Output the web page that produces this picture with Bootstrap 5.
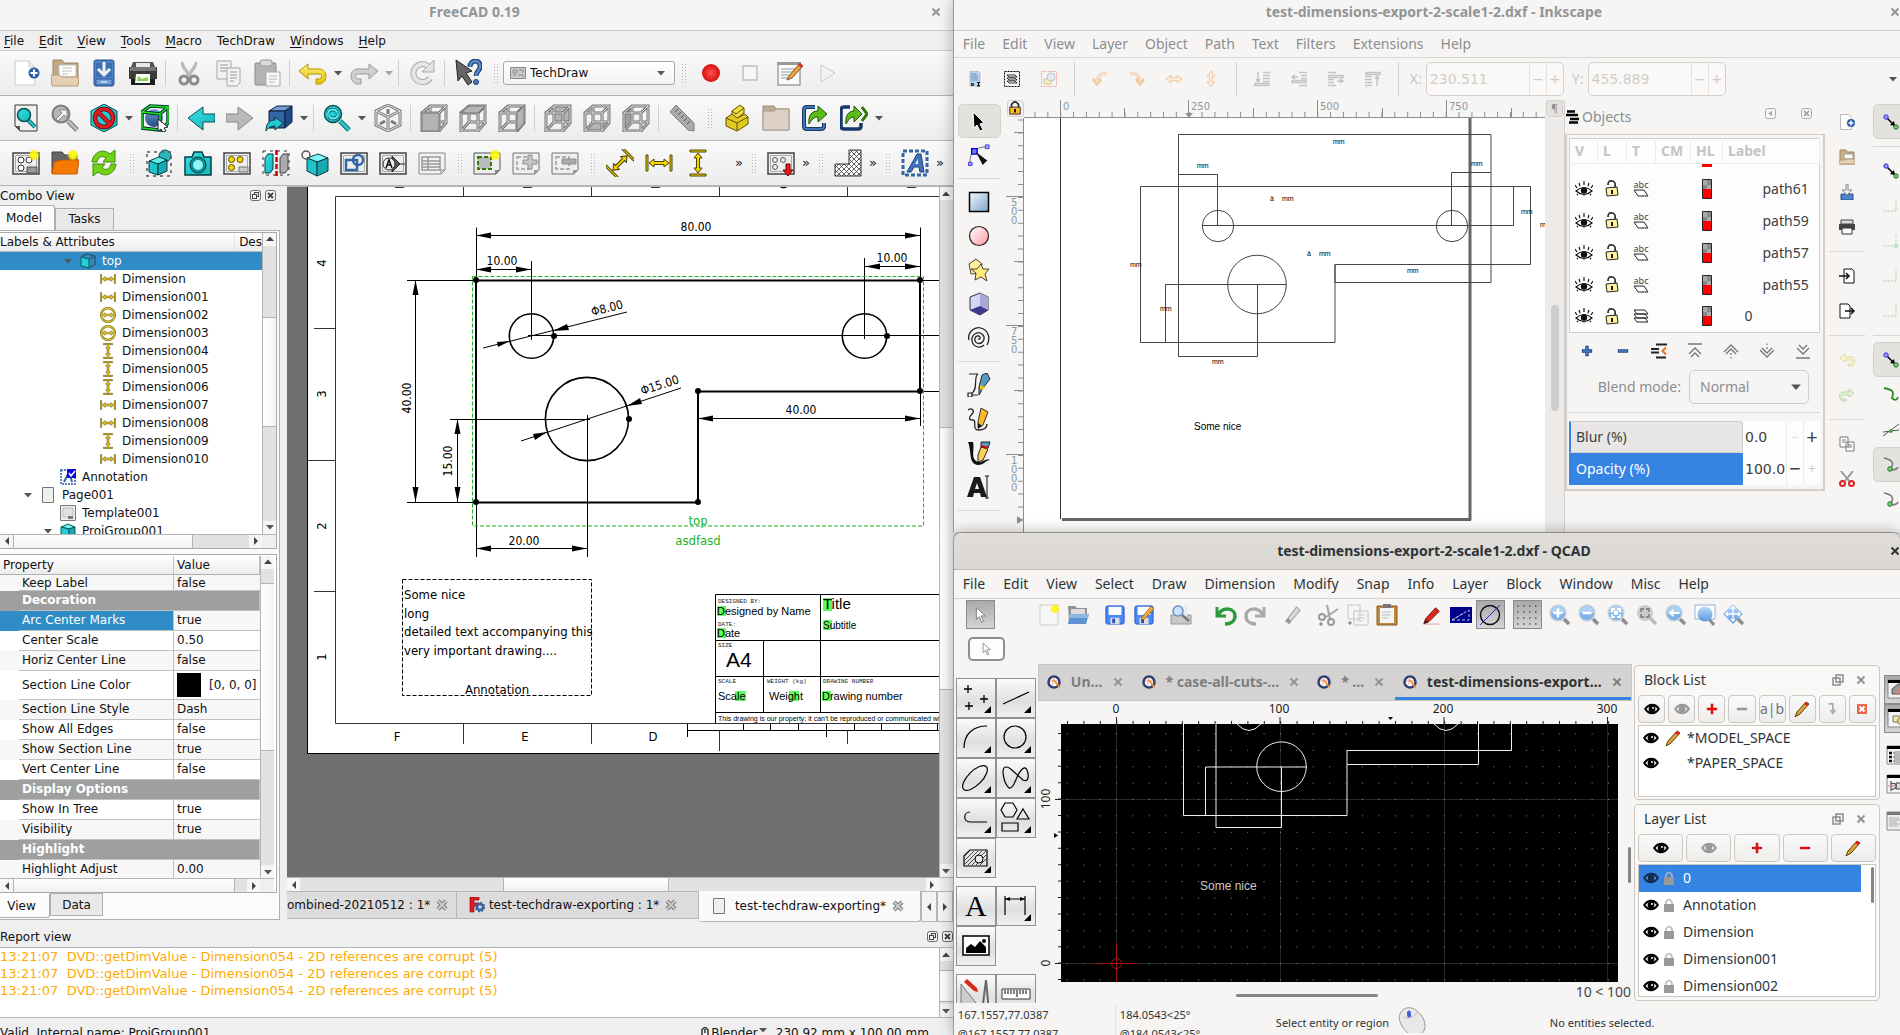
<!DOCTYPE html>
<html lang="en">
<head>
<meta charset="utf-8">
<meta name="viewport" content="width=device-width, initial-scale=1">
<title>CAD desktop</title>
<link href="https://cdn.jsdelivr.net/npm/bootstrap@5.3.0/dist/css/bootstrap.min.css" rel="stylesheet">
<style>
:root{--noto:"Noto Sans","Open Sans",sans-serif;--deja:"DejaVu Sans",sans-serif}
body{height:100vh;overflow:hidden;background:#efefef;font:14px/20px var(--noto);color:#2e3436}
.desk{height:100vh;overflow:hidden}
button,input,select{font:inherit;color:inherit}
.btn{--bs-btn-padding-x:0;--bs-btn-padding-y:0;--bs-btn-font-size:inherit;--bs-btn-line-height:inherit;--bs-btn-border-width:0;--bs-btn-border-radius:0;--bs-btn-color:inherit;font-family:inherit;display:inline-flex;align-items:center;justify-content:center;flex:none}
svg{display:block;flex:none;overflow:hidden}
.i28{width:28px;height:28px}.i24{width:24px;height:24px}.i22{width:22px;height:22px}.i20{width:20px;height:20px}.i16{width:16px;height:16px}.i12{width:12px;height:12px}.i10{width:10px;height:10px}
.clip{overflow:hidden;min-width:0;min-height:0}
.titlebar{height:31px;background:#f6f5f4;border-bottom:1px solid #cfcdcb;color:#929595;font-weight:700;padding:0 0 6px 24px}
.titlebar .btn{width:10px;height:16px}

/* FreeCAD */
.fc{flex:0 0 50.15%;background:#efefef;font:12px/16px var(--deja);color:#111}
.fc .titlebar{font:700 14px/20px var(--noto);padding-left:18px;padding-right:12px}
.fcmenu{height:20px;border-bottom:1px solid #cfcfcf;gap:15px;padding:0 4px}
.fcmenu u{text-underline-offset:2px}
.fctb{height:45px;border-bottom:1px solid #b4b4b4;background:linear-gradient(#fafafa,#ececec);padding-right:8px}
.fctb .btn{width:39px;height:40px}
.fctb .dd{width:12px}
.sepv{width:7px;height:26px;background:linear-gradient(#cfcfcf,#cfcfcf) center/1px 100% no-repeat;flex:none}
.grip{width:16px;height:20px;flex:none;background:radial-gradient(circle,#b5b5b5 0 1px,transparent 1px) 6px 0/3px 3px repeat;background-clip:content-box;padding:0 5px}
.grip0{width:6px;padding:0 2px}
.more{font-size:13px}
.wb{width:172px;height:24px;border:1px solid #a8a8a8;border-radius:3px;background:linear-gradient(#fff,#f3f3f3);padding:0 8px 0 6px}
.wb select{appearance:none;border:0;background:none;padding:0 0 0 4px;color:#111}
.combo{width:287px;flex:none;padding-right:7px}
.dockttl{height:20px}
.dockttl svg{width:11px;height:11px}
.rephead{height:23px;padding-top:2px}
.fctab{border:1px solid #b0b0b0!important;height:23px;width:59px;background:#e9e9e9}
.fctab.on{background:#fcfcfc;height:26px;width:55px;border-bottom-color:#fcfcfc!important;border-left:0!important;border-radius:0 3px 0 0;padding-right:6px}
.fctab.low{height:25px;width:50px;border-radius:0 0 3px 0;border-color:#fcfcfc #b0b0b0 #b0b0b0!important}
.fctab.lowd{width:53px}
.fctabs{height:25px;margin-bottom:-1px}
.lowtabs{height:26px}
.pane{border:1px solid #b0b0b0;border-left:0;background:#fbfbfb;padding:1px 2px 0 0;margin-bottom:4px}
.boxed{border:1px solid #a9a9a9;border-left:0;background:#fff}
.treebox{height:317px}
.propbox{padding:1px 2px 0 0;margin-top:5px}
.hdr{height:19px;background:linear-gradient(#fff,#ececec);border-bottom:1px solid #b9b9b9;flex:none}
.trow{height:18px;white-space:nowrap}
.lv1{padding-left:20px}.lv2{padding-left:40px}.lv3{padding-left:60px}.lv5{padding-left:100px}
.trow .tw{width:20px;padding-left:3px;flex:none}
.trow .lb{padding-left:6px}
.sel{background:#308cc6;color:#fff}
.sbv,.sbh{flex:none;display:flex;background:#e2e2e2}
.sbv{width:14px;flex-direction:column;border-left:1px solid #b4b4b4}
.sbh{height:14px;border-top:1px solid #b4b4b4}
.sbv .btn{width:100%;height:13px;background:#f6f6f6}.sbh .btn{height:100%;width:13px;background:#f6f6f6}
.sbv .th{background:linear-gradient(90deg,#fff,#f3f3f3);border:solid #b4b4b4;border-width:1px 0}
.sbh .th{background:linear-gradient(#fff,#f0f0f0);border:solid #b4b4b4;border-width:0 1px}
.sbh .cn{width:14px;background:#efefef}
.ptab{width:100%;table-layout:fixed;border-collapse:separate;border-spacing:0}
.ptab td,.ptab th{height:20px;padding:0 0 0 3px;border-bottom:1px solid #c0c0c0;font-weight:400;overflow:hidden;white-space:nowrap;line-height:16px}
.ptab thead th{height:19px;border-bottom-color:#b0b0b0}
.ptab th{border-right:1px solid #c0c0c0}
.ptab tbody tr>:first-child{border-bottom:0}
.ptab tr.alt>*{background:#f7f7f7}
.ptab tr.grp>*{background:#9f9f9f;color:#fff;font-weight:700}
.ptab tr.cut>*{height:16px;line-height:14px;vertical-align:bottom}
.ptab tr.cur>:nth-child(-n+2){background:#308cc6;color:#fff}
.ptab .tall>*{height:29px}
.swatch{width:24px;height:24px;background:#000}
.canvasg{background:#6f6f6f}
.mainv{border-top:1px solid #b4b4b4}
.mtabs{height:33px}
.mtab{height:28px;border:1px solid #b5b5b5;border-left:0;background:#dcdcdc;white-space:nowrap;padding-left:12px}
.mtab.on{height:31px;background:#fafafa;border-radius:0 0 3px 3px;border-top:0}
.mtab .btn{margin-right:2px}
.mnav{width:16px;height:31px;border:1px solid #b5b5b5!important;background:#f4f4f4}
.report{height:71px;border:solid #b4b4b4;border-width:1px 0;background:#fff;color:#ffaa00;font-size:13px;line-height:17px}
.fcstat{height:17px;padding-top:7px}

/* windows on the right */
.rwin{box-shadow:0 0 14px rgba(0,0,0,.3);background:#f6f5f4;border-left:1px solid #9b9b9b;position:relative}
.menu{gap:18px;padding-left:9px}
.ink{flex:0 0 51.4%;color:#8b8e8f}
.ink .menu{height:27px;border-bottom:1px solid #d8d6d3;gap:17px}
.itb{height:42px;padding-left:3px}
.itb .btn{width:37px;height:32px}
.itb .endb{width:14px}
.itb label{color:#c9c7c5}
.flipx{transform:scaleX(-1)}.quart{transform:rotate(90deg)}.half{transform:rotate(180deg)}
.ivs{width:1px;height:34px;background:#d5d0cc;margin:0 7px 0 6px}
.spin{width:138px;height:34px;border:1px solid #d5d0cc;border-radius:5px;color:#d0cdc9;background:#faf9f8;overflow:hidden;font:14px/20px var(--deja)}
.spin input{width:102px;border:0;background:none;padding:0 3px}
.spin .btn{width:17px;height:32px;border-left:1px solid #e4e1de!important}
.tools{width:51px;padding:4px 4px 0 4px;flex:none}
.tools .btn{width:43px;height:34px;border-radius:5px}
.tools .ihs{margin:6px 0}
.press{background:#e3e2de;border:1px solid #d5d0cc!important}
.ihs{height:1px;background:#d8d5d2;flex:none}
.iscroll{width:19px;background:#ecebea}
.icorner{width:17px;height:17px;font-size:10px;line-height:15px}
.idock{width:261px;flex:none;border-left:1px solid #d5d0cc}
.idhead{height:34px;gap:1px}
.idhead .endb{margin:0 13px 0 24px}
.ibox{border:1px solid #d5cdc8;border-width:1px 2px 2px 2px;padding:3px 3px 4px 2px;height:357px}
.otab{width:100%;table-layout:fixed;background:#fdfdfd;border:1px solid #d5cdc8;color:#3b3f40}
.otab td{height:32px;padding:0;white-space:nowrap;vertical-align:middle}
.otab .p1{padding-left:40px}.otab .p0{padding-left:22px}
.otab th{height:25px;padding:0 0 0 5px;color:#c3c4c4;border-right:1px solid #efeeee;border-bottom:1px solid #efeeee;vertical-align:middle}
.otab tr.cut td{height:9px;vertical-align:top;line-height:0}
.otab svg{margin:auto}
.abc{font-size:9px;line-height:8px;text-align:center}
.orow{height:35px}.orow .btn{width:36px;height:28px}
.brow{padding:2px 11px 8px 0}
.blend{border:1px solid #d0ccc8;border-radius:5px;width:120px;height:34px;position:relative}
.blend select{appearance:none;border:0;background:none;width:100%;padding:0 10px;height:32px;color:#8b8e8f}
.lev{height:32px;color:#3b3f40;background:#fdfdfd}
.lev label{width:175px;padding-left:5px;height:32px;line-height:30px;border:1px solid #d0ccc8;border-left:2px solid #3584e4;background:#e9e7e5;border-radius:0 3px 3px 0}
.lev.full label{background:#3584e4;color:#fff;border-color:#3584e4;border-radius:0}
.lev input{width:43px;border:0;background:none;padding:0 0 0 2px;font:14px/20px var(--deja)}
.lev .btn{width:17px;height:32px;border-left:1px solid #eceaea!important}
.cmd{width:43px;padding:4px 3px 0 4px;flex:none}.cmd .btn{width:36px;height:35px}
.cmd .ihs,.snap .ihs{margin:7px 0 6px}
.snap{width:32px;padding:4px 0 0 5px;flex:none;overflow:hidden}.snap .btn{width:36px;height:35px;border-radius:5px}
.vth{width:8px;background:#cdcdcd;border-radius:4px}

.qc{flex:1 1 0;min-height:0;color:#2e3436;border-radius:8px 8px 0 0;border-top:1px solid #8f8c89}
.qc .titlebar{height:37px;background:linear-gradient(#e1deda,#dad6d2);border-bottom:1px solid #bfb8b1;color:#2e3436;padding-bottom:0;border-radius:8px 8px 0 0}
.qc .menu{height:29px;border-bottom:1px solid #d5d2cf}
.qtb{height:32px;padding-left:12px}
.qtb .btn{width:29px;height:29px}
.w8{width:8px}.w16{width:16px}.w40{width:40px}
.qon{background:linear-gradient(#a9a9a9,#d5d5d5);border:1px solid #8a8a8a!important}
.qrow2{height:33px;padding-top:6px}
.qopt{width:37px;height:24px;border:2px solid #8f8f8f!important;border-radius:5px!important;background:#fdfdfd;margin-left:14px}
.qbox{width:84px;padding:14px 0 0 2px;flex:none}
.qgrid{display:grid;grid-template-columns:40px 40px}
.qgrid .btn{width:40px;height:40px;border:1px solid #909090!important;background:linear-gradient(#fbfbfb,#dfdfdf 60%,#f0f0f0)}
.qgrid .serif{font:30px/40px "Liberation Serif",serif;color:#000}
.qgrid svg{width:40px;height:40px}
.qtabs{height:37px;background:#d5d3d1;border:1px solid #c9c5c1;color:#7c7e7f;font-weight:700}
.qtab{padding:0 11px 0 8px;gap:10px}
.qtab.on{color:#2e3436;box-shadow:inset 0 -3px #3584e4}
.qside{width:248px;padding:1px 0 2px 2px;gap:4px}
.qdock{border:1px solid #cdc7c2;border-radius:4px;background:#f9f8f7;padding:0 3px 3px}
.qblocks{height:135px}
.qdock h2{font-size:14px;line-height:20px;margin:0;height:29px;padding:0 10px 0 6px;font-weight:400;flex:none}
.qb{gap:3px}.qb .btn{flex:1 1 0;height:28px;border:1px solid #cdc7c2!important;border-radius:4px;background:linear-gradient(#fafafa,#eeedec)}
.qlist{background:#fff;border:1px solid #cdc7c2;margin:2px 0 0}
.qblocks .qlist{height:72px}
.lrow{height:27px;padding-left:4px}
.qblocks .lrow{height:25px;gap:6px}
.lrow.on{background:#3584e4;color:#fff;margin-right:14px}
.lth{right:1px;top:2px;width:3px;height:36px;background:#858585}
.qstat{font-size:11px;line-height:19px;height:32px;padding-top:2px}
.qco{width:162px;white-space:nowrap}.qpo{width:156px}.qhint{width:126px;padding:8px 0 0 4px}.qsel{padding:8px 0 0 124px}
.qr{width:16px;flex:none;padding-top:11px}
.qr .btn{height:29px;width:29px;justify-content:flex-start;padding-left:2px}
</style>
<script src="https://cdn.jsdelivr.net/npm/bootstrap@5.3.0/dist/js/bootstrap.bundle.min.js" defer></script>
</head>
<body>
<svg width="0" height="0" class="position-absolute" aria-hidden="true"><defs>
<linearGradient id="gy" x1="0" y1="0" x2="0" y2="1"><stop offset="0" stop-color="#fff27a"/><stop offset="1" stop-color="#e0c000"/></linearGradient>
<linearGradient id="gc" x1="0" y1="0" x2="1" y2="1"><stop offset="0" stop-color="#34e0e2"/><stop offset="1" stop-color="#16b5bd"/></linearGradient>
<linearGradient id="gb" x1="0" y1="0" x2="0" y2="1"><stop offset="0" stop-color="#729fcf"/><stop offset="1" stop-color="#204a87"/></linearGradient>
<linearGradient id="gp" x1="0" y1="0" x2="1" y2="1"><stop offset="0" stop-color="#fff"/><stop offset="1" stop-color="#ff9aa5"/></linearGradient>
<linearGradient id="gs" x1="0" y1="0" x2="1" y2="1"><stop offset="0" stop-color="#f4f9ff"/><stop offset="1" stop-color="#7aa3c8"/></linearGradient>
<linearGradient id="gl" x1="0" y1="0" x2="0" y2="1"><stop offset="0" stop-color="#bcdcf8"/><stop offset="1" stop-color="#5a97dd"/></linearGradient>
<radialGradient id="gglow"><stop offset="0" stop-color="#ffff30"/><stop offset=".6" stop-color="#fff200" stop-opacity=".9"/><stop offset="1" stop-color="#fff200" stop-opacity="0"/></radialGradient>
<radialGradient id="gred"><stop offset="0" stop-color="#ff5050"/><stop offset="1" stop-color="#d80f0f"/></radialGradient>
<pattern id="hatch" width="5" height="5" patternUnits="userSpaceOnUse"><path d="M0 0l5 5M5 0L0 5" stroke="#222" stroke-width=".7"/></pattern>
<symbol id="x" viewBox="0 0 10 10"><path d="M1.500 1.500l7 7M8.500 1.500l-7 7" stroke="currentColor" stroke-width="2"/></symbol>
<symbol id="dn" viewBox="0 0 10 10"><path d="M1 3h8L5 7.500z" fill="#555"/></symbol>
<symbol id="up" viewBox="0 0 10 10"><path d="M1 7h8L5 2.500z" fill="#444"/></symbol>
<symbol id="lf" viewBox="0 0 10 10"><path d="M7 1v8L3 5z" fill="#444"/></symbol>
<symbol id="rt" viewBox="0 0 10 10"><path d="M3 1v8l4-4z" fill="#444"/></symbol>
<symbol id="flt" viewBox="0 0 11 11"><rect x=".5" y=".5" width="10" height="10" rx="2" fill="#f4f4f4" stroke="#666"/><rect x="4.500" y="2.500" width="4" height="4" fill="none" stroke="#444"/><rect x="2.500" y="4.500" width="4" height="4" fill="#f4f4f4" stroke="#444"/></symbol>
<symbol id="cls" viewBox="0 0 11 11"><rect x=".5" y=".5" width="10" height="10" rx="2" fill="#f4f4f4" stroke="#666"/><path d="M3 3l5 5M8 3L3 8" stroke="#444" stroke-width="1.800"/></symbol>
<symbol id="clx" viewBox="0 0 12 12"><path d="M2 2l8 8M10 2l-8 8" stroke="#777" stroke-width="4"/><path d="M2 2l8 8M10 2l-8 8" stroke="#c9c9c9" stroke-width="2.200"/></symbol>
<!-- FreeCAD file toolbar -->
<symbol id="new" viewBox="0 0 28 28"><path d="M3 2h14l6 6v18H3z" fill="#fff" stroke="#c9c9c9"/><path d="M17 2v6h6" fill="#eee" stroke="#ccc"/><circle cx="22" cy="14" r="5.500" fill="#2a5fa8"/><path d="M22 10.500v7M18.500 14h7" stroke="#fff" stroke-width="2"/></symbol>
<symbol id="open" viewBox="0 0 28 28"><path d="M2 1h9l2 3h14v16H2z" fill="#c2a882" stroke="#9d8562"/><rect x="8" y="6" width="17" height="12" fill="#fff" stroke="#bbb"/><path d="M11 9h10M11 12h10M11 15h6" stroke="#bbb"/><path d="M0 16h8l3 2h17l-1 9H1z" fill="#e7cfb3" stroke="#b5997a"/></symbol>
<symbol id="save" viewBox="0 0 28 28"><rect x="4" y="1" width="20" height="26" rx="2" fill="#4f82c4" stroke="#27528f"/><path d="M6 4h16v14H6z" fill="#3d6fb3"/><path d="M14 3v11M8 10l6 6 6-6" fill="none" stroke="#eef3f8" stroke-width="3"/><rect x="6" y="20" width="16" height="6" fill="#6f9ed6" stroke="#2d5a99"/><path d="M11 23h6" stroke="#fff"/></symbol>
<symbol id="print" viewBox="0 0 28 28"><path d="M4 3h20l2 5H2z" fill="#555"/><path d="M7 4h14v4H7z" fill="#e8e8e8"/><path d="M0 8h28v12H0z" fill="#3b3b3b"/><path d="M1 8h26v4H1z" fill="#777"/><path d="M2 20h24v6H2z" fill="#1d1d1d"/><path d="M7 15h14v9H6z" fill="#f4fff0"/><path d="M9 17l4 3 6-2v4H8z" fill="#8fce5a"/></symbol>
<symbol id="cut" viewBox="0 0 28 28"><path d="M7 3c0 5 4 9 9 14M21 3c0 5-4 9-9 14" fill="none" stroke="#b9b9b9" stroke-width="3"/><circle cx="9" cy="21" r="4" fill="none" stroke="#8b8b8b" stroke-width="3"/><circle cx="19" cy="21" r="4" fill="none" stroke="#8b8b8b" stroke-width="3"/></symbol>
<symbol id="copy" viewBox="0 0 28 28"><g fill="#f2f2f2" stroke="#a5a5a5"><path d="M3 2h14v18H3z"/><path d="M13 9h13v15l-3 3H13z"/></g><path d="M6 6h8M6 9h8M6 12h6M16 13h7M16 16h7M16 19h7M16 22h4" stroke="#b7b7b7" stroke-width="1.500"/></symbol>
<symbol id="paste" viewBox="0 0 28 28"><rect x="2" y="4" width="21" height="22" rx="1" fill="#b3b3b3" stroke="#8b8b8b"/><rect x="7" y="1" width="12" height="6" rx="2" fill="#d9d9d9" stroke="#999"/><path d="M13 13h14v14H13z" fill="#f8f8f8" stroke="#aaa"/><path d="M16 17h8M16 20h8M16 23h6" stroke="#ccc" stroke-width="1.500"/></symbol>
<symbol id="undo" viewBox="0 0 28 28"><path d="M9 5v5h12c8 1 8 13 0 15h-4v-5h3c4-1 3-5 0-5H9v5L0 12z" fill="url(#gy)" stroke="#b39500"/></symbol>
<symbol id="redo" viewBox="0 0 28 28"><path d="M19 5v5H7c-8 1-8 13 0 15h4v-5H8c-4-1-3-5 0-5h11v5l9-8z" fill="#cfcfcf" stroke="#999"/></symbol>
<symbol id="reload" viewBox="0 0 28 28"><path d="M22 19A9 9 0 1 1 20 7" fill="none" stroke="#a9a9a9" stroke-width="6"/><path d="M26 1v12H14z" fill="#e4e4e4" stroke="#a9a9a9"/><path d="M22 19A9 9 0 1 1 20 7" fill="none" stroke="#e6e6e6" stroke-width="4"/></symbol>
<symbol id="what" viewBox="0 0 28 28"><path d="M2 1l16 11-6 2 6 9-4 3-6-9-4 5z" fill="#666" stroke="#222"/><path d="M16 8c0-8 11-8 10 0 0 4-4 4-4 9" fill="none" stroke="#1d3f70" stroke-width="5"/><path d="M16 8c0-8 11-8 10 0 0 4-4 4-4 9" fill="none" stroke="#5a8cca" stroke-width="2.500"/><circle cx="22" cy="23" r="2.500" fill="#4a7cbb" stroke="#1d3f70"/></symbol>
<symbol id="rec" viewBox="0 0 28 28"><circle cx="14" cy="14" r="9" fill="url(#gred)"/></symbol>
<symbol id="stop" viewBox="0 0 28 28"><rect x="7" y="7" width="14" height="14" fill="#f6f6f6" stroke="#ccc" stroke-width="2"/></symbol>
<symbol id="macro" viewBox="0 0 28 28"><rect x="3" y="4" width="22" height="22" fill="#fafafa" stroke="#777"/><path d="M2 3h24v3H2z" fill="#999"/><path d="M6 10h16M6 13h15M6 16h10M6 19h8" stroke="#999"/><path d="M25 4l3 3-11 12-5 2 2-4z" fill="#f0a33c" stroke="#7a5a2a"/><path d="M25 4l3 3-2 2-3-3z" fill="#d33"/></symbol>
<symbol id="play" viewBox="0 0 28 28"><path d="M7 6v17l14-9z" fill="#f4f4f4" stroke="#c9c9c9"/></symbol>
<symbol id="tdm" viewBox="0 0 16 12"><path d="M.5.5h15v11H.5z" fill="#ccc" stroke="#888"/><path d="M3 3h4v3H3zM9 3h4v3M3 8h3M8 8h5v2" fill="none" stroke="#888"/></symbol>
<!-- view toolbar -->
<symbol id="fit" viewBox="0 0 28 28"><path d="M3 1h22v26H8l-5-5z" fill="#f0f0ee" stroke="#333"/><path d="M3 22h5v5z" fill="#555"/><path d="M16 16l7 7" stroke="#0a6a70" stroke-width="4"/><path d="M16 16l7 7" stroke="#27c8ce" stroke-width="2"/><circle cx="12" cy="11" r="6.500" fill="url(#gc)" stroke="#0b4e55" stroke-width="1.500"/></symbol>
<symbol id="fitsel" viewBox="0 0 28 28"><path d="M17 17l9 9" stroke="#777" stroke-width="5"/><path d="M17 17l9 9" stroke="#bbb" stroke-width="3"/><circle cx="10" cy="10" r="8.500" fill="#b5b5b5" stroke="#7d7d7d" stroke-width="2"/><path d="M5 15l6-6-3-3h8v8l-3-3-6 6z" fill="#f0f0f0" stroke="#888"/></symbol>
<symbol id="nodraw" viewBox="0 0 28 28"><path d="M14 0l13 7v14l-13 7L1 21V7z" fill="url(#gc)" stroke="#094a4e"/><circle cx="14" cy="14" r="9" fill="none" stroke="#6a0000" stroke-width="4.500"/><path d="M8 8l12 12" stroke="#6a0000" stroke-width="4.500"/><circle cx="14" cy="14" r="9" fill="none" stroke="#e01b24" stroke-width="3"/><path d="M8 8l12 12" stroke="#e01b24" stroke-width="3"/></symbol>
<symbol id="selbox" viewBox="0 0 28 28"><circle cx="13" cy="14" r="9" fill="url(#gb)"/><path d="M1 8l18 2v16L1 24zM1 8l8-6 18 1-8 7M27 3v16l-8 7" fill="none" stroke="#033" stroke-width="3.500"/><path d="M1 8l18 2v16L1 24zM1 8l8-6 18 1-8 7M27 3v16l-8 7" fill="none" stroke="#1de01d" stroke-width="1.500"/><path d="M17 15l10 8-4 1 2 3-3 1-2-3-3 2z" fill="#fff" stroke="#222"/></symbol>
<symbol id="back" viewBox="0 0 28 28"><path d="M1 14L16 3v7h12v8H16v8z" fill="url(#gc)" stroke="#0b4e55"/></symbol>
<symbol id="fwd" viewBox="0 0 28 28"><path d="M27 14L12 3v7H0v8h12v8z" fill="#b9b9b9" stroke="#888"/></symbol>
<symbol id="link" viewBox="0 0 28 28"><path d="M4 7l8-5h15l-7 5z" fill="#729fcf" stroke="#0b1f3f"/><path d="M4 7h16v17H4z" fill="#3465a4" stroke="#0b1f3f"/><path d="M20 7l7-5v16l-7 6z" fill="#204a87" stroke="#0b1f3f"/><path d="M1 27c0-8 4-11 9-11v-3l8 6-8 7v-4c-4 0-6 1-9 5z" fill="#22cbd1" stroke="#063c40"/></symbol>
<symbol id="sync" viewBox="0 0 28 28"><path d="M17 17l9 9" stroke="#0a6a70" stroke-width="5"/><path d="M17 17l9 9" stroke="#27c8ce" stroke-width="3"/><circle cx="10" cy="10" r="8.500" fill="url(#gc)" stroke="#0b4e55" stroke-width="1.500"/><path d="M5 9c1-4 7-5 9-1M15 11c-1 4-7 5-9 1" fill="none" stroke="#0b4e55" stroke-width="3.500"/><path d="M5 9c1-4 7-5 9-1M15 11c-1 4-7 5-9 1" fill="none" stroke="#5ff0f2" stroke-width="2"/></symbol>
<g id="wire0"><path d="M2 9h17v18H2zM2 9l8-7h16v17l-7 8M19 9l7-7M10 2v16H26M10 18l-8 9" fill="none" stroke="#747474" stroke-width="3"/><path d="M2 9h17v18H2zM2 9l8-7h16v17l-7 8M19 9l7-7M10 2v16H26M10 18l-8 9" fill="none" stroke="#dcdcdc" stroke-width="1"/></g>
<symbol id="iso" viewBox="0 0 28 28"><path d="M14 1l12 6v14l-12 6L2 21V7zM2 7l12 6 12-6M14 13v14M6 20l5-3M22 20l-5-3M14 5v5" fill="none" stroke="#7b7b7b" stroke-width="3"/><path d="M14 1l12 6v14l-12 6L2 21V7zM2 7l12 6 12-6M14 13v14" fill="none" stroke="#e6e6e6"/></symbol>
<symbol id="vf" viewBox="0 0 28 28"><use href="#wire0"/><path d="M2 9h17v18H2z" fill="#b4b4b4" stroke="#747474"/></symbol>
<symbol id="vt" viewBox="0 0 28 28"><use href="#wire0"/><path d="M2 9l8-7h16l-7 7z" fill="#b4b4b4" stroke="#747474"/></symbol>
<symbol id="vr" viewBox="0 0 28 28"><use href="#wire0"/><path d="M19 9l7-7v17l-7 8z" fill="#b4b4b4" stroke="#747474"/></symbol>
<symbol id="vb" viewBox="0 0 28 28"><path d="M10 2h16v16H10z" fill="#b4b4b4"/><use href="#wire0"/></symbol>
<symbol id="vd" viewBox="0 0 28 28"><path d="M2 27l8-9h16l-7 9z" fill="#b4b4b4"/><use href="#wire0"/></symbol>
<symbol id="vl" viewBox="0 0 28 28"><path d="M2 9l8-7v16l-8 9z" fill="#a0a0a0"/><use href="#wire0"/></symbol>
<symbol id="ruler" viewBox="0 0 28 28"><path d="M8 1l18 18v8l-6-1L2 8z" fill="#aaa" stroke="#7b7b7b"/><path d="M10 5l-3 3M13 8l-3 3M16 11l-3 3M19 14l-3 3M22 17l-3 3" stroke="#555"/></symbol>
<symbol id="part" viewBox="0 0 28 28"><path d="M9 7l8-6 4 3v5l-8 6-4-3z" fill="#f0dc3e" stroke="#5c4f00"/><path d="M9 7l4 3 8-6" fill="none" stroke="#5c4f00"/><path d="M3 14l6-4 5 4 8-4 3 3v7l-11 7-11-5z" fill="#e3ca1f" stroke="#5c4f00"/><path d="M3 14l11 5 11-6M14 19v8" fill="none" stroke="#5c4f00"/></symbol>
<symbol id="fold" viewBox="0 0 28 28"><path d="M1 2h11l2 3h13v21H1z" fill="#c0ab99" stroke="#a08c7a"/><path d="M1 7h11l3-2h12v21H1z" fill="#ddd1c6" stroke="#a99888"/></symbol>
<symbol id="lnk" viewBox="0 0 28 28"><path d="M14 3H6q-3 0-3 3v16q0 3 3 3h14q3 0 3-3v-3" fill="none" stroke="#16386a" stroke-width="4"/><path d="M14 3H6q-3 0-3 3v16q0 3 3 3h14q3 0 3-3v-3" fill="none" stroke="#4f84c4" stroke-width="1.500"/><path d="M8 20c-1-9 3-13 9-13V2l9 8-9 8v-5c-4 0-6 2-9 7z" fill="#5bbd1c" stroke="#1f5200"/></symbol>
<symbol id="lnk2" viewBox="0 0 28 28"><path d="M10 3H4q-3 0-3 3v16q0 3 3 3h14q3 0 3-3v-3" fill="none" stroke="#16386a" stroke-width="3.500"/><path d="M6 20c-1-9 3-13 8-13V2l8 8-8 8v-5c-3 0-5 2-8 7z" fill="#5bbd1c" stroke="#1f5200"/><path d="M22 3l5 7-5 7" fill="none" stroke="#2d7a00" stroke-width="3"/></symbol>
<!-- TechDraw toolbar -->
<g id="sheet"><rect x="1" y="4" width="26" height="21" fill="#eee" stroke="#444" stroke-width="1.500"/><path d="M3.500 6.500h21v16h-21z" fill="none" stroke="#aaa"/></g>
<symbol id="tpage" viewBox="0 0 28 28"><use href="#sheet"/><g fill="#fff" stroke="#333"><circle cx="9" cy="11" r="3"/><circle cx="17" cy="11" r="3"/><circle cx="9" cy="19" r="3"/></g><path d="M15 18h10v6H15z" fill="#999" stroke="#555"/><circle cx="22" cy="6" r="6" fill="url(#gglow)"/></symbol>
<symbol id="tfold" viewBox="0 0 28 28"><path d="M1 3h10l3 3h12v18H1z" fill="#666" stroke="#444"/><path d="M1 25l2-12 8-2h17l-2 14z" fill="#f57900" stroke="#c45a00"/><circle cx="22" cy="6" r="6" fill="url(#gglow)"/></symbol>
<symbol id="trefr" viewBox="0 0 28 28"><path d="M2 13C3 3 13-1 20 5l5-4v12H13l3-4C12 6 8 8 7 13z" fill="#73d216" stroke="#3f8a06"/><path d="M26 15c-1 10-11 14-18 8l-5 4V15h12l-3 4c4 3 8 1 9-4z" fill="#73d216" stroke="#3f8a06"/></symbol>
<g id="cube"><path d="M4 12l10-4 8 3-9 4z" fill="#5ff0f2" stroke="#063c40"/><path d="M4 12l9 3v11l-9-3z" fill="#20c5cc" stroke="#063c40"/><path d="M13 15l9-4v11l-9 4z" fill="#16a9b1" stroke="#063c40"/></g>
<symbol id="tview" viewBox="0 0 28 28"><circle cx="20" cy="7" r="6" fill="#27b8be" stroke="#0b4e55"/><path d="M2 3h24v24H2z" fill="none" stroke="#555" stroke-width="1.500" stroke-dasharray="3 4"/><use href="#cube"/></symbol>
<symbol id="tcam" viewBox="0 0 28 28"><path d="M1 8h7l2-5h8l2 5h7v18H1z" fill="url(#gc)" stroke="#063c40" stroke-width="1.500"/><circle cx="14" cy="16" r="8" fill="#0e8f97" stroke="#063c40"/><circle cx="14" cy="16" r="5" fill="#8ff6f8"/></symbol>
<symbol id="tsec" viewBox="0 0 28 28"><use href="#sheet"/><g fill="#f5d400" stroke="#5c4f00"><circle cx="8.500" cy="10.500" r="3"/><circle cx="17" cy="10.500" r="3"/><circle cx="8.500" cy="18.500" r="3"/></g><path d="M16 18h9v5h-9z" fill="#ccc" stroke="#777"/></symbol>
<symbol id="tcut" viewBox="0 0 28 28"><path d="M3 9l3-4h5v15l-3 4H3z" fill="url(#gc)" stroke="#063c40"/><path d="M18 9l3-4h5v15l-3 4h-5z" fill="#aaa" stroke="#444"/><path d="M14.500 1v26" stroke="#cc0000" stroke-width="2.500" stroke-dasharray="5 2"/><path d="M1 2h26v24H1z" fill="none" stroke="#333" stroke-dasharray="3 4"/></symbol>
<symbol id="tdet" viewBox="0 0 28 28"><path d="M6 9l11-4 10 4-11 4z" fill="#7ff5f6" stroke="#063c40"/><path d="M6 9l10 4v14L6 22z" fill="#20c5cc" stroke="#063c40"/><path d="M16 13l11-4v13l-11 5z" fill="#16a9b1" stroke="#063c40"/><circle cx="5" cy="6" r="4" fill="none" stroke="#555" stroke-width="1.500"/></symbol>
<symbol id="tdraft" viewBox="0 0 28 28"><use href="#sheet"/><circle cx="18" cy="11" r="5" fill="none" stroke="#3465a4" stroke-width="2.500"/><path d="M6 11h11v10H6z" fill="none" stroke="#3465a4" stroke-width="2.500"/></symbol>
<symbol id="tarch" viewBox="0 0 28 28"><use href="#sheet"/><path d="M13 7l8 8-8 8zM21 15h5" fill="#555" stroke="#222"/><circle cx="10" cy="15" r="6" fill="#eee" stroke="#333"/><path d="M7 19l3-8 3 8M8 16h4" fill="none" stroke="#111" stroke-width="1.500"/></symbol>
<symbol id="tspr" viewBox="0 0 28 28"><path d="M1 4h26v17l-4 4H1z" fill="#f3f3f3" stroke="#888"/><path d="M4 8h18v13H4zM4 12h18M4 15h18M4 18h18M10 8v13" fill="none" stroke="#999" stroke-width="1.500"/><path d="M23 25v-4h4" fill="none" stroke="#888"/></symbol>
<g id="clipsh"><path d="M1 4h26v17l-4 4H1z" fill="#eee" stroke="#555"/><path d="M22 26v-5h5z" fill="#888"/></g>
<symbol id="clip1" viewBox="0 0 28 28"><use href="#clipsh"/><path d="M5 8h13v12H5z" fill="#bbb" stroke="#2f7a00" stroke-width="2" stroke-dasharray="4 2"/><circle cx="22" cy="6" r="6" fill="url(#gglow)"/></symbol>
<symbol id="clip2" viewBox="0 0 28 28"><g opacity=".8"><use href="#clipsh"/><path d="M5 8h13v12H5z" fill="none" stroke="#888" stroke-width="1.500" stroke-dasharray="4 2"/><path d="M16 6h4v5h5v4h-5v5h-4v-5h-5v-4h5z" fill="#bbb" stroke="#777"/></g></symbol>
<symbol id="clip3" viewBox="0 0 28 28"><g opacity=".8"><use href="#clipsh"/><path d="M5 8h13v12H5z" fill="none" stroke="#888" stroke-width="1.500" stroke-dasharray="4 2"/><path d="M11 10h14v5H11z" fill="#999" stroke="#777"/></g></symbol>
<g id="dimh"><path d="M1 6h2v16H1zM25 6h2v16h-2z" fill="#f5d400" stroke="#4d4200"/><path d="M4 14l5-4v2.500h10V10l5 4-5 4v-2.500H9V18z" fill="#f5d400" stroke="#4d4200"/></g>
<symbol id="dh" viewBox="0 0 28 28"><use href="#dimh"/></symbol>
<symbol id="dv" viewBox="0 0 28 28"><use href="#dimh" transform="rotate(90 14 14)"/></symbol>
<symbol id="dl" viewBox="0 0 28 28"><use href="#dimh" transform="rotate(-45 14 14)"/></symbol>
<symbol id="dd0" viewBox="0 0 28 28"><circle cx="14" cy="14" r="12" fill="none" stroke="#7d6c00" stroke-width="4"/><circle cx="14" cy="14" r="12" fill="none" stroke="#d8c33a" stroke-width="2"/><path d="M4 14l5-4v2.500h10V10l5 4-5 4v-2.500H9V18z" fill="#d8c33a" stroke="#7d6c00"/></symbol>
<symbol id="texp" viewBox="0 0 28 28"><use href="#sheet"/><g fill="none" stroke="#555"><circle cx="8" cy="11" r="2.500"/><circle cx="16" cy="11" r="2.500"/><circle cx="8" cy="18" r="2.500"/></g><path d="M19 15h4v6h3l-5 6-5-6h3z" fill="#e01b24" stroke="#700"/></symbol>
<symbol id="thatch" viewBox="0 0 28 28"><path d="M1 15h14V1h12v26H1z" fill="#fff" stroke="#333"/><path d="M1 15h14V1h12v26H1z" fill="url(#hatch)"/></symbol>
<symbol id="tann" viewBox="0 0 28 28"><path d="M2 2h24v24H2z" fill="none" stroke="#3465a4" stroke-width="3" stroke-dasharray="4 2"/><path d="M6 23L16 5h4l3 18h-4l-1-5h-5l-3 5z" fill="#3f74bb" stroke="#1d4379"/><path d="M14 15h3v-5z" fill="#eee"/></symbol>
<symbol id="fcf" viewBox="0 0 16 16"><path d="M1 0h9v3H5v3h4v3H5v6H1z" fill="#e01b24" stroke="#700" stroke-width=".6"/><circle cx="11" cy="10" r="3" fill="none" stroke="#3465a4" stroke-width="2.500"/><circle cx="11" cy="10" r="4.500" fill="none" stroke="#3465a4" stroke-width="1.500" stroke-dasharray="2 1.500"/></symbol>
<symbol id="pg" viewBox="0 0 16 16"><path d="M2.500.5h11v15h-11z" fill="#f0f0ee" stroke="#777"/></symbol>
<symbol id="tpl" viewBox="0 0 16 16"><path d="M.5.5h15v15H.5z" fill="#eee" stroke="#777"/><path d="M3 3h10v9H3z" fill="#e0e0e0" stroke="#bbb"/><path d="M8 11h5v3H8z" fill="#777"/></symbol>
<symbol id="ann16" viewBox="0 0 16 16"><path d="M1 1h14v14H1z" fill="none" stroke="#5a86bd" stroke-width="2" stroke-dasharray="2 1"/><path d="M4 13L9 3l3 10" fill="none" stroke="#3465a4" stroke-width="2"/><path d="M7 0h9v9H7z" fill="#0a0ae0"/><path d="M9 4l2 3 4-5" fill="none" stroke="#fff" stroke-width="1.500"/></symbol>
<symbol id="cube16" viewBox="0 0 16 16"><path d="M1 4l7-3 7 3-6 2z" fill="#6ff2f4" stroke="#0a5a60"/><path d="M1 4l8 2v9l-8-2z" fill="#1fd0d6" stroke="#0a5a60"/><path d="M9 6l6-2v8l-6 3z" fill="#16a9b1" stroke="#0a5a60"/></symbol>
<symbol id="cubew" viewBox="0 0 16 16"><path d="M1 4l8 2v9l-8-2z" fill="#1fd0d6" stroke="#0a5a60"/><path d="M1 4l6-3 8 2v8l-6 4M9 6l6-3" fill="none" stroke="#2d5d70" stroke-width="1.500"/></symbol>
<!-- Inkscape -->
<symbol id="k1" viewBox="0 0 16 16"><path d="M3 0h8l2 2v13H3z" fill="#bcd3ec" stroke="#9ab" stroke-width=".7"/><path d="M4 3h6M4 5h7M4 7h7M4 9h7" stroke="#6b94c4"/><path d="M4 12h3v3H4z" fill="#345"/><path d="M10 11.500h3M10 15h3M11.500 11v4" stroke="#000"/></symbol>
<symbol id="k2" viewBox="0 0 16 16"><path d="M.5.5h15v15H.5z" fill="none" stroke="#000" stroke-dasharray="2 1"/><path d="M3 4h8l2 2H5zM3 7h8l2 2H5zM3 10h8l2 2H5z" fill="#fff" stroke="#000" stroke-width=".8"/></symbol>
<symbol id="k3" viewBox="0 0 16 16"><g opacity=".4"><path d="M.5.5h15v15H.5z" fill="none" stroke="#e33" stroke-dasharray="2 1"/><path d="M3 8h7v5H3z" fill="#fce94f" stroke="#a80"/><circle cx="10" cy="6" r="4" fill="#cde" stroke="#678"/></g></symbol>
<symbol id="rotl" viewBox="0 0 16 16"><path d="M15 3C8 2 5 5 5 13M1 8l4 5 4-5" fill="none" stroke="#efc8a5" stroke-width="3"/><path d="M15 3C8 2 5 5 5 12" fill="none" stroke="#fbeadb" stroke-width="1.200"/></symbol>
<symbol id="fliph" viewBox="0 0 16 16"><path d="M0 8l5-4v2.500h6V4l5 4-5 4V9.500H5V12z" fill="#fbeadb" stroke="#efc8a5"/></symbol>
<symbol id="low" viewBox="0 0 16 16"><g stroke="#c6c4c2" stroke-width="1.500"><path d="M9 1.500h7M9 4.500h7M9 7.500h7M9 10.500h7M4 1v9M2 8l2 3 2-3" fill="none"/><path d="M1 12.500h14v2H1z" fill="#f3eeda"/></g></symbol>
<symbol id="low1" viewBox="0 0 16 16"><g stroke="#c6c4c2" stroke-width="1.500" fill="none"><path d="M8 1.500h8M10 4.500h6M10 7.500h6M1 9.500h14v2H1zM8 14.500h8M1 6h6M4 4L1 6l3 2"/></g></symbol>
<symbol id="ai" viewBox="0 0 22 22"><path d="M5 2l1 16 3-3 3 6 3-1-3-6 4-1z" fill="#000" stroke="#fff"/></symbol>
<symbol id="anode" viewBox="0 0 24 24"><path d="M2 22C2 8 7 4 20 3" fill="none" stroke="#666"/><path d="M4 5h6v6H4z" fill="#7a7af0" stroke="#00d" stroke-width="1.500"/><path d="M.5 20h4v3.500h-4zM19 1h4v4h-4z" fill="#aaf" stroke="#33d"/><path d="M9 9l12 9-5 5z" fill="#111"/></symbol>
<symbol id="arect" viewBox="0 0 22 22"><path d="M1.500 1.500h19v19h-19z" fill="url(#gs)" stroke="#000" stroke-width="1.500"/></symbol>
<symbol id="aell" viewBox="0 0 22 22"><circle cx="11" cy="11" r="9.500" fill="url(#gp)" stroke="#222" stroke-width="1.200"/></symbol>
<symbol id="astar" viewBox="0 0 24 24"><path d="M2 6l7-5 6 5-2 9-9 1z" fill="#fff0a0" stroke="#444"/><path d="M14 6l2 5h6l-4 5 2 7-6-4-6 3 1-7-5-4h6z" fill="#ffea7a" stroke="#444"/></symbol>
<symbol id="abox" viewBox="0 0 24 24"><path d="M3 5l10-4 8 4v13l-8 5-10-5z" fill="#d5d5f5" stroke="#333"/><path d="M13 1l8 4v13l-8-4z" fill="#a8a8dd"/><path d="M3 18l10-4 8 4-8 5z" fill="#3a3a90"/></symbol>
<symbol id="aspir" viewBox="0 0 24 24"><path d="M11 13c2 1 3-2 1-3-4-1-6 5-2 7 5 2 9-4 6-8-4-5-12-1-11 6 1 6 8 8 12 4M2 14C0 6 8 0 14 2c7 2 10 10 6 17" fill="none" stroke="#222" stroke-width="1.300"/></symbol>
<symbol id="apen" viewBox="0 0 24 24"><path d="M2 1h9C6 3 12 17 4 21M1 20h4v4H1zM5 22h6" fill="none" stroke="#222" stroke-width="1.200"/><path d="M15 2l5-2 3 6-7 9-4 7v-8z" fill="#5a9ac0" stroke="#223"/><path d="M13 12l5 2-2 3-3-1z" fill="#f5c211"/></symbol>
<symbol id="apcl" viewBox="0 0 24 24"><path d="M1 3c4-3 7 1 4 4s-4 6 1 6c4 0-1 10 5 10 6 0 9-2 9-6" fill="none" stroke="#222" stroke-width="1.300"/><path d="M14 1l7 4-5 13-5 3v-6z" fill="#fbb62a" stroke="#333"/><path d="M11 16l4 3-4 3z" fill="#111"/></symbol>
<symbol id="acal" viewBox="0 0 24 24"><path d="M1 1h5c2 8-3 17 5 20 4 1 9-5 12-2-4 0-6 5-12 5C1 23 5 10 1 1z" fill="#111"/><path d="M14 6l7 2-5 11-5 2v-7z" fill="#fbd05a" stroke="#222"/><path d="M14 1h9l-2 6-7-1z" fill="#5a9ac0" stroke="#223"/><path d="M14 5l7 2" stroke="#d00" stroke-width="2"/></symbol>
<symbol id="atxt" viewBox="0 0 24 24"><path d="M0 22L7 2h6l7 20h-6l-1-4H7l-1 4zM8 14h4l-2-6z" fill="#1b1b1b"/><path d="M18 1h4M18 23h4M20 1v22" stroke="#111"/></symbol>
<symbol id="lockc" viewBox="0 0 16 16"><path d="M4 8V4q4-6 8 0v4" fill="none" stroke="#222" stroke-width="1.800"/><path d="M2 7h12v8H2z" fill="#fbb62a" stroke="#222"/><path d="M8 9v4" stroke="#000" stroke-width="2"/></symbol>
<symbol id="eyek" viewBox="0 0 18 16"><path d="M1 10q8-7 16 0-8 7-16 0z" fill="#fff" stroke="#111" stroke-width="1.200"/><circle cx="9" cy="9.500" r="3.200" fill="#111"/><path d="M2 7L0 4M5 5L4 2M9 4V0M13 5l1-3M16 7l2-3M3 13l-1 1M9 13.500v1M15 13l1 1" stroke="#111" stroke-width="1.200"/></symbol>
<symbol id="lock0" viewBox="0 0 14 17"><path d="M3 5q0-5 4-4 4 0 3 7" fill="none" stroke="#222" stroke-width="1.600"/><path d="M1 8l11-1 1 8-11 1z" fill="#fdf3a0" stroke="#222"/><path d="M7 10v4" stroke="#000" stroke-width="1.800"/></symbol>
<symbol id="par" viewBox="0 0 16 8"><path d="M1 1h10l4 6H5z" fill="#fff" stroke="#222"/></symbol>
<symbol id="lay" viewBox="0 0 16 14"><path d="M1 9h11l3 4H4zM1 5h11l3 4H4zM1 1h11l3 4H4z" fill="#fff" stroke="#222"/></symbol>
<symbol id="hl" viewBox="0 0 10 20"><path d="M.5.5h9v19h-9z" fill="#aaa" stroke="#222"/><path d="M5 1h4v5H5zM1 6h4v4H1z" fill="#888"/><path d="M1 10h8v9H1z" fill="#f00"/></symbol>
<symbol id="pl" viewBox="0 0 14 14"><path d="M7 1v12M1 7h12" stroke="#1d4379" stroke-width="4"/><path d="M7 2v10M2 7h10" stroke="#4a7dbd" stroke-width="2"/></symbol>
<symbol id="mi" viewBox="0 0 14 14"><path d="M1 7h12" stroke="#1d4379" stroke-width="4"/><path d="M2 7h10" stroke="#4a7dbd" stroke-width="2"/></symbol>
<symbol id="o3" viewBox="0 0 16 16"><path d="M5 1.500h11M0 6h8M0 9.500h8M5 14.500h10" stroke="#222" stroke-width="2"/><path d="M15 4.500L11.500 8l3.500 3.500" fill="none" stroke="#e8731a" stroke-width="2"/></symbol>
<symbol id="otop" viewBox="0 0 16 16"><path d="M1 1h14M2 11l6-6 6 6M4 14l4-4 4 4" fill="none" stroke="#777" stroke-width="1.300"/></symbol>
<symbol id="oup" viewBox="0 0 16 16"><path d="M1 9l7-7 7 7M3 11l5-5 5 5M8 10v2M8 14v1.500" fill="none" stroke="#777" stroke-width="1.300"/></symbol>
<symbol id="objs" viewBox="0 0 16 14"><path d="M2 1.500h8M1 5h12M5 9h9M4 12.500h9" stroke="#000" stroke-width="2.500"/></symbol>
<symbol id="c1" viewBox="0 0 16 16"><path d="M1.500.5h8l3 3v12h-11z" fill="#fff" stroke="#bbb"/><circle cx="12" cy="9" r="4" fill="#2a5fa8"/><path d="M12 6.500v5M9.500 9h5" stroke="#fff" stroke-width="1.500"/></symbol>
<symbol id="c2" viewBox="0 0 16 16"><path d="M1 1h6l1 2h7v12H1z" fill="#cdb087" stroke="#9d8562"/><path d="M5 5h9v5H5z" fill="#fff" stroke="#999"/><path d="M0 11h6l2-1h8v5H0z" fill="#e7cfb3" stroke="#b5997a"/></symbol>
<symbol id="c3" viewBox="0 0 16 16"><path d="M2 10h12v6H2z" fill="#4f82c4" stroke="#27528f"/><path d="M7 0h2v6h4l-5 5-5-5h4z" fill="#eee" stroke="#888"/></symbol>
<symbol id="c4" viewBox="0 0 16 16"><path d="M2 1h12v4H2z" fill="#ddd" stroke="#444"/><path d="M0 5h16v6H0z" fill="#444"/><path d="M3 9h10v6H3z" fill="#f6fff2" stroke="#333"/></symbol>
<symbol id="c5" viewBox="0 0 16 16"><path d="M5 1h8l2 2v12H5z" fill="#fff" stroke="#111"/><path d="M0 8h10M7 5l3 3-3 3" fill="none" stroke="#111" stroke-width="1.500"/></symbol>
<symbol id="c6" viewBox="0 0 16 16"><path d="M1 1h8l2 2v12H1z" fill="#fff" stroke="#111"/><path d="M6 8h9M12 5l3 3-3 3" fill="none" stroke="#111" stroke-width="1.500"/></symbol>
<symbol id="c7" viewBox="0 0 16 16"><path d="M6 2L1 6l5 4V8h6c2 0 2 4 0 4H9v2h4c4-2 3-9-1-9H6z" fill="#fbf6d0" stroke="#dcd3a0"/></symbol>
<symbol id="c8" viewBox="0 0 16 16"><path d="M10 2l5 4-5 4V8H4c-2 0-2 4 0 4h3v2H3c-4-2-3-9 1-9h6z" fill="#e2f3d5" stroke="#b9d6a5"/></symbol>
<symbol id="c9" viewBox="0 0 16 16"><path d="M1 1h8v10H1zM7 6h8v9H7z" fill="#fff" stroke="#777"/><path d="M3 4h4M3 6h3M9 9h4M9 11h4" stroke="#777"/></symbol>
<symbol id="c10" viewBox="0 0 16 16"><path d="M2 0l8 10M14 0L6 10" stroke="#999" stroke-width="2"/><circle cx="3.500" cy="12.500" r="2.500" fill="none" stroke="#d22" stroke-width="2"/><circle cx="12.500" cy="12.500" r="2.500" fill="none" stroke="#d22" stroke-width="2"/></symbol>
<symbol id="s1" viewBox="0 0 16 16"><path d="M4 4l7 7" stroke="#000" stroke-width="1.500"/><path d="M12 12l-5-1 4-4z"/><circle cx="3" cy="3" r="2.200" fill="#99f" stroke="#33d"/><circle cx="13" cy="13" r="2.200" fill="#7c7" stroke="#272"/></symbol>
<symbol id="s2" viewBox="0 0 16 16"><path d="M13 1v12H0" fill="none" stroke="#c9dcc9" stroke-width="1.500" stroke-dasharray="2 1"/></symbol>
<symbol id="s2b" viewBox="0 0 16 16"><path d="M13 1v12H0" fill="none" stroke="#c9dcc9" stroke-width="1.500" stroke-dasharray="2 1"/><circle cx="13" cy="13" r="2.500" fill="#c5e3d0"/></symbol>
<symbol id="s3" viewBox="0 0 16 16"><path d="M1 1c10 2 10 4 8 10 3 3 5 2 6-1" fill="none" stroke="#2a8a2a" stroke-width="1.800"/></symbol>
<symbol id="s4" viewBox="0 0 16 16"><path d="M0 14L16 2M0 10l16-2" stroke="#555"/><circle cx="8" cy="9" r="2" fill="#4a4"/></symbol>
<symbol id="s5" viewBox="0 0 16 16"><path d="M1 1c10 2 10 6 6 12 4 0 7 0 8-3" fill="none" stroke="#777" stroke-width="1.500"/><circle cx="7" cy="12" r="2.300" fill="#7c7" stroke="#272"/></symbol>
<!-- QCAD -->
<symbol id="cur" viewBox="0 0 22 22"><path d="M7 3v13l3-3 3 6 2-1-3-6h5z" fill="#fff" stroke="#777"/></symbol>
<symbol id="qnew" viewBox="0 0 22 22"><path d="M2 1h18v20H2z" fill="#f7f7f7" stroke="#ccc"/><circle cx="17" cy="5" r="5" fill="url(#gglow)"/></symbol>
<symbol id="qopen" viewBox="0 0 22 22"><path d="M1 2h7l2 2h10v14H2z" fill="#8f9194"/><path d="M4 5h14v10H4z" fill="#ddd"/><path d="M1 20L3 10h19l-3 10z" fill="#5f93cf"/><path d="M3 10h19l-1 4H2z" fill="#8db7e4"/></symbol>
<symbol id="qsave" viewBox="0 0 22 22"><rect x="1" y="1" width="20" height="20" rx="2" fill="#4b8af5" stroke="#1a4fc4"/><path d="M4 2h14v9H4z" fill="#fff"/><path d="M6 14h10v7H6z" fill="#ddd"/><path d="M8 15h3v5H8z" fill="#1a4fc4"/></symbol>
<symbol id="qsave2" viewBox="0 0 22 22"><use href="#qsave"/><path d="M19 1l3 3-10 11-4 2 1-4z" fill="#f5a83c" stroke="#7a4a00" stroke-width=".7"/></symbol>
<symbol id="qprev" viewBox="0 0 22 22"><path d="M1 11h20v9H1z" fill="#c9c9c9" stroke="#999"/><path d="M5 2h12v10H5z" fill="#e7eef6"/><circle cx="8" cy="7" r="5" fill="#cfe2f7" stroke="#6a94c4" stroke-width="1.500"/><path d="M12 11l7 6" stroke="#777" stroke-width="2.500"/></symbol>
<symbol id="qundo" viewBox="0 0 22 22"><path d="M2 3v9h9" fill="none" stroke="#2a9a3a" stroke-width="3"/><path d="M3 11c5-9 17-7 17 1 0 5-4 8-10 8" fill="none" stroke="#2a9a3a" stroke-width="3.500"/></symbol>
<symbol id="qredo" viewBox="0 0 22 22"><path d="M20 3v9h-9" fill="none" stroke="#aaa" stroke-width="3"/><path d="M19 11C14 2 2 4 2 12c0 5 4 8 10 8" fill="none" stroke="#aaa" stroke-width="3.500"/></symbol>
<symbol id="qera" viewBox="0 0 22 22"><path d="M16 2l4 4L8 20l-4-2z" fill="#d8d8d8" stroke="#888"/><path d="M4 18l3-4 3 4-2 3z" fill="#999"/></symbol>
<symbol id="qcut" viewBox="0 0 22 22"><path d="M9 1l3 14M20 5L8 13" stroke="#a5a5a5" stroke-width="2"/><circle cx="4" cy="13" r="3" fill="none" stroke="#999" stroke-width="2"/><circle cx="13" cy="18" r="3" fill="none" stroke="#999" stroke-width="2"/><path d="M3 18v4M1 20h4" stroke="#777"/></symbol>
<symbol id="qcopy" viewBox="0 0 22 22"><path d="M1 1h12v14H1zM7 7h14v14H7z" fill="#f6f6f6" stroke="#c4c4c4"/><path d="M10 11h8M10 14h8M10 17h6" stroke="#ccc"/><path d="M3 17v4M1 19h4" stroke="#777"/></symbol>
<symbol id="qpaste" viewBox="0 0 22 22"><path d="M1 2h20v19H1z" fill="#c08a3e" stroke="#8a5a1a"/><path d="M4 4h14v15H4z" fill="#f4f4f4"/><path d="M7 0h8v4H7z" fill="#777"/><path d="M6 8h9M6 11h9M6 14h6" stroke="#bbb"/></symbol>
<symbol id="qred" viewBox="0 0 22 22"><path d="M15 3l4 4L8 18l-6 3 2-6z" fill="#d8281c" stroke="#7a0c05"/><path d="M2 21l2-5 3 3z" fill="#222"/><path d="M3 21h17" stroke="#e99" stroke-width="1"/></symbol>
<symbol id="qdraft" viewBox="0 0 22 22"><path d="M0 3h22v16H0z" fill="#00008b"/><path d="M2 16h17V6zM2 16L14 9" fill="none" stroke="#bcd" stroke-dasharray="3 2"/></symbol>
<symbol id="qhalf" viewBox="0 0 22 22"><circle cx="11" cy="11" r="9.500" fill="none" stroke="#111" stroke-width="1.500"/><path d="M1 21L21 1" stroke="#22d"/></symbol>
<symbol id="qdots" viewBox="0 0 22 22"><path d="M1 2h21M1 8h21M1 14h21M1 20h21" stroke="#555" stroke-width="1.500" stroke-dasharray="1.500 4.500"/></symbol>
<g id="lens"><path d="M14 14l6 6" stroke="#8d8d8d" stroke-width="3.500"/><circle cx="9" cy="9" r="8" fill="#7fb2e8" stroke="#cfd6dd" stroke-width="1.500"/><path d="M2 9a7 7 0 0 1 14 0z" fill="#aed0f3"/></g>
<symbol id="z1" viewBox="0 0 22 22"><use href="#lens"/><path d="M9 4.500v9M4.500 9h9" stroke="#fff" stroke-width="2.500"/></symbol>
<symbol id="z2" viewBox="0 0 22 22"><use href="#lens"/><path d="M4.500 9h9" stroke="#fff" stroke-width="2.500"/></symbol>
<symbol id="z3" viewBox="0 0 22 22"><use href="#lens"/><path d="M5 8V5h3M10 5h3v3M13 10v3h-3M8 13H5v-3" fill="none" stroke="#fff" stroke-width="1.800"/><path d="M7 7h4v4H7z" fill="#fff"/></symbol>
<symbol id="z4" viewBox="0 0 22 22"><path d="M14 14l6 6" stroke="#bbb" stroke-width="3.500"/><circle cx="9" cy="9" r="8" fill="#ccc"/><path d="M5 8V5h3M10 5h3v3M13 10v3h-3M8 13H5v-3" fill="none" stroke="#888" stroke-width="1.800"/></symbol>
<symbol id="z5" viewBox="0 0 22 22"><use href="#lens"/><path d="M3.500 9l5-4v3h6v2h-6v3z" fill="#fff"/></symbol>
<symbol id="z6" viewBox="0 0 22 22"><path d="M1 1h20v14H1z" fill="#fff" stroke="#8fb4e0"/><path d="M15 15l5 6" stroke="#8d8d8d" stroke-width="3"/><circle cx="11" cy="10" r="7.500" fill="url(#gl)"/></symbol>
<symbol id="z7" viewBox="0 0 22 22"><path d="M14 14l6 6" stroke="#8d8d8d" stroke-width="3.500"/><path d="M10 0l10 10-10 10L0 10z" fill="url(#gl)"/><path d="M10 3v14M3 10h14M8 5l2-2 2 2M8 15l2 2 2-2M5 8l-2 2 2 2M15 8l2 2-2 2" fill="none" stroke="#fff" stroke-width="1.300"/></symbol>
<symbol id="qlogo" viewBox="0 0 14 14"><circle cx="7" cy="7" r="5.500" fill="#fff" stroke="#2b3f74" stroke-width="2.500"/><path d="M6 2v8M3 6h8" stroke="#e88" stroke-width=".8"/><path d="M6 5l5 7 2 1-1-3-5-6z" fill="#f08a24"/></symbol>
<g id="cor"><path d="M35 28v7h-7z" fill="#000"/></g>
<symbol id="t1" viewBox="0 0 40 40"><path d="M12 7v8M8 11h8M28 17v8M24 21h8M13 24v8M9 28h8" stroke="#000" stroke-width="1.300"/><use href="#cor"/></symbol>
<symbol id="t2" viewBox="0 0 40 40"><path d="M7 26l26-12" stroke="#000" stroke-width="1.200"/><use href="#cor"/></symbol>
<symbol id="t3" viewBox="0 0 40 40"><path d="M8 30C8 16 17 8 31 8" fill="none" stroke="#000" stroke-width="1.200"/><use href="#cor"/></symbol>
<symbol id="t4" viewBox="0 0 40 40"><circle cx="19" cy="19" r="11" fill="none" stroke="#000" stroke-width="1.200"/><use href="#cor"/></symbol>
<symbol id="t5" viewBox="0 0 40 40"><ellipse cx="19" cy="20" rx="16" ry="7" transform="rotate(-45 19 20)" fill="none" stroke="#000" stroke-width="1.200"/><use href="#cor"/></symbol>
<symbol id="t6" viewBox="0 0 40 40"><path d="M7 14C7 7 12 8 17 13L27 22C33 25 33 17 31 12 29 8 26 10 22 17L18 26C14 33 12 30 9 24Q7 18 7 14z" fill="none" stroke="#000" stroke-width="1.200"/><use href="#cor"/></symbol>
<symbol id="t7" viewBox="0 0 40 40"><path d="M14 14c-7 0-7 10 0 10h17" fill="none" stroke="#000" stroke-width="1.200"/><use href="#cor"/></symbol>
<symbol id="t8" viewBox="0 0 40 40"><path d="M9 5h8l4 7-4 7H9l-4-7zM27 11l6 10H21zM6 25h16v8H6z" fill="none" stroke="#000" stroke-width="1.200"/><use href="#cor"/></symbol>
<symbol id="t9" viewBox="0 0 40 40"><path d="M8 18l6-6h17v16H8z" fill="none" stroke="#000" stroke-width="1.200"/><path d="M9 22l9-9M9 26l13-13M12 27l14-14M16 27l14-14M20 27l10-10M24 27l6-6" stroke="#000" stroke-width=".7"/><circle cx="23" cy="21" r="4" fill="#eee" stroke="#000"/><use href="#cor"/></symbol>
<symbol id="ta" viewBox="0 0 40 40"><path d="M9 29V10M29 29V10M9 13h20" fill="none" stroke="#000" stroke-width="1.200"/><path d="M9 13l5-2v4zM29 13l-5-2v4z"/><use href="#cor"/></symbol>
<symbol id="tb0" viewBox="0 0 40 40"><path d="M7 10h26v19H7z" fill="#fff" stroke="#000" stroke-width="1.500"/><path d="M10 27v-5l5-4 4 3 5-6 6 6v6z"/><circle cx="28" cy="15" r="2"/></symbol>
<symbol id="tc0" viewBox="0 0 40 40"><path d="M5 10v28h22z" fill="#ccc" stroke="#777"/><path d="M8 8l3-3 10 9 1 4-4-1z" fill="#d8281c"/><path d="M30 6l-4 32M30 6l3 32" stroke="#666" stroke-width="2"/></symbol>
<symbol id="td0" viewBox="0 0 40 40"><path d="M6 15h28v10H6z" fill="#fff" stroke="#333"/><path d="M9 16v4M12 16v4M15 16v4M18 16v4M21 16v7M24 16v4M27 16v4M30 16v4" stroke="#000"/></symbol>
<symbol id="eye" viewBox="0 0 16 12"><path d="M0 6C4-1 13-1 16 6c-4 7-12 7-16 0z" fill="#000"/><path d="M2.500 6c3-4 8-4 11 0-3 4-8 4-11 0z" fill="#fff"/><circle cx="8" cy="6" r="3.400" fill="#000"/><circle cx="9" cy="5" r="1" fill="#fff"/></symbol>
<symbol id="eyeg" viewBox="0 0 16 12"><path d="M0 6C4-1 13-1 16 6c-4 7-12 7-16 0z" fill="#999"/><path d="M2.500 6c3-4 8-4 11 0-3 4-8 4-11 0z" fill="#eee"/><circle cx="8" cy="6" r="3.400" fill="#999"/></symbol>
<symbol id="eyeb" viewBox="0 0 16 12"><path d="M0 6C4-1 13-1 16 6c-4 7-12 7-16 0z" fill="#122b4c"/><path d="M2.500 6c3-4 8-4 11 0-3 4-8 4-11 0z" fill="#5d9ce9"/><circle cx="8" cy="6" r="3.400" fill="#122b4c"/></symbol>
<symbol id="pr" viewBox="0 0 14 14"><path d="M7 1v12M1 7h12" stroke="#e01010" stroke-width="3"/></symbol>
<symbol id="mr" viewBox="0 0 14 14"><path d="M1 7h12" stroke="#e01010" stroke-width="3"/></symbol>
<symbol id="mg" viewBox="0 0 14 14"><path d="M1 7h12" stroke="#999" stroke-width="3"/></symbol>
<symbol id="pen" viewBox="0 0 16 16"><path d="M12 1l3 2L6 13l-5 3 2-5z" fill="#e0a33a" stroke="#5c3d00"/><path d="M12 1l3 2-2 2-3-2z" fill="#d22"/></symbol>
<symbol id="ins" viewBox="0 0 14 14"><path d="M3 1h5v9M5 8l3 4 3-4" fill="none" stroke="#aaa" stroke-width="2"/></symbol>
<symbol id="del" viewBox="0 0 12 12"><path d="M1 1h10v10H1z" fill="#e8684a"/><path d="M3.500 3.500l5 5M8.500 3.500l-5 5" stroke="#fff" stroke-width="2"/></symbol>
<symbol id="lk" viewBox="0 0 12 14"><path d="M3 7V4q3-5 6 0v3" fill="none" stroke="#b5b5b5" stroke-width="1.500"/><path d="M1 6h10v8H1z" fill="#999"/></symbol>
<symbol id="flq" viewBox="0 0 12 12"><path d="M4 1h7v7H4zM1 4h7v7H1z" fill="none" stroke="#8a8c8c" stroke-width="1.500"/></symbol>
<symbol id="mouse" viewBox="0 0 28 28"><path d="M3 7C8 0 17 2 23 10s5 16-1 20-14-2-18-9-3-11-1-14z" fill="#e8e8e8" stroke="#999"/><path d="M5 12c4 3 12 0 14-5" fill="none" stroke="#bbb"/><ellipse cx="11" cy="9" rx="2" ry="3.500" fill="#3b5fd0"/></symbol>
<symbol id="qw" viewBox="0 0 20 20"><path d="M1 1h22v18H1z" fill="#f4f4f4" stroke="#888"/><path d="M1 1h22v3H1z" fill="#000"/><path d="M3 8h3M3 12h3M3 16h3" stroke="#111" stroke-width="2.500"/><path d="M8 7h12v2H8zM8 11h12v2H8zM8 15h12v2H8z" fill="#fff" stroke="#444" stroke-width=".7"/></symbol>
<symbol id="qw2" viewBox="0 0 20 20"><path d="M1 1h22v18H1z" fill="#f4f4f4" stroke="#888"/><path d="M1 1h22v3H1z" fill="#000"/><path d="M5 14v-4l6-5h9v4l-6 6H5z" fill="#999" stroke="#555"/><path d="M10 16l4-8" stroke="#e77" stroke-width="2"/></symbol>
<symbol id="qw3" viewBox="0 0 20 20"><path d="M1 1h22v18H1z" fill="#f4f4f4" stroke="#888"/><path d="M1 1h22v3H1z" fill="#000"/><path d="M6 8h8v6H6z" fill="#f5e6a0" stroke="#777"/><circle cx="14" cy="13" r="3.500" fill="#e9d789" stroke="#777"/></symbol>
<symbol id="qw5" viewBox="0 0 20 20"><path d="M1 1h22v18H1z" fill="#f4f4f4" stroke="#888"/><path d="M1 1h22v3H1z" fill="#000"/><path d="M5 7v10M5 9l5 1v4l-5 2M10 9h10v6H10z" fill="#ddd" stroke="#444"/><path d="M2 12h8" stroke="#e77"/></symbol>
<symbol id="qw4" viewBox="0 0 20 20"><path d="M1 1h22v18H1z" fill="#eee" stroke="#888"/><path d="M1 1h22v3H1z" fill="#777"/><path d="M3 7h10M3 9h12M3 11h8M3 13h12M3 15h9" stroke="#aaa"/></symbol>
</defs></svg>

<div class="desk d-flex">
<!-- FreeCAD -->
<section class="fc d-flex flex-column clip" aria-label="FreeCAD">
 <header class="titlebar d-flex align-items-center flex-shrink-0"><span class="flex-fill text-center">FreeCAD 0.19</span><button class="btn" aria-label="Close"><svg class="i10"><use href="#x"/></svg></button></header>
 <nav class="fcmenu d-flex align-items-center flex-shrink-0"><button class="btn"><span><u>F</u>ile</span></button><button class="btn"><span><u>E</u>dit</span></button><button class="btn"><span><u>V</u>iew</span></button><button class="btn"><span><u>T</u>ools</span></button><button class="btn"><span><u>M</u>acro</span></button><button class="btn">TechDraw</button><button class="btn"><span><u>W</u>indows</span></button><button class="btn"><span><u>H</u>elp</span></button></nav>
 <div class="fctb d-flex align-items-center flex-shrink-0" role="toolbar" aria-label="File"><span class="grip grip0"></span>
 <button class="btn" aria-label="New"><svg class="i28"><use href="#new"/></svg></button><button class="btn" aria-label="Open"><svg class="i28"><use href="#open"/></svg></button><button class="btn" aria-label="Save"><svg class="i28"><use href="#save"/></svg></button><button class="btn" aria-label="Print"><svg class="i28"><use href="#print"/></svg></button><span class="sepv"></span>
 <button class="btn" aria-label="Cut"><svg class="i28"><use href="#cut"/></svg></button><button class="btn" aria-label="Copy"><svg class="i28"><use href="#copy"/></svg></button><button class="btn" aria-label="Paste"><svg class="i28"><use href="#paste"/></svg></button><span class="sepv"></span>
 <button class="btn" aria-label="Undo"><svg class="i28"><use href="#undo"/></svg></button><button class="btn dd" aria-label="Undo list"><svg class="i10"><use href="#dn"/></svg></button><button class="btn" aria-label="Redo"><svg class="i28"><use href="#redo"/></svg></button><button class="btn dd opacity-50" aria-label="Redo list"><svg class="i10"><use href="#dn"/></svg></button><span class="sepv"></span>
 <button class="btn" aria-label="Refresh"><svg class="i28"><use href="#reload"/></svg></button><span class="sepv"></span><button class="btn" aria-label="What's this"><svg class="i28"><use href="#what"/></svg></button><span class="grip"></span>
 <span class="wb d-flex align-items-center"><svg width="16" height="12"><use href="#tdm"/></svg><select class="flex-fill" aria-label="Workbench"><option>TechDraw</option></select><svg class="i10"><use href="#dn"/></svg></span><span class="grip"></span>
 <button class="btn" aria-label="Record macro"><svg class="i28"><use href="#rec"/></svg></button><button class="btn" aria-label="Stop macro"><svg class="i28"><use href="#stop"/></svg></button><button class="btn" aria-label="Macros"><svg class="i28"><use href="#macro"/></svg></button><button class="btn" aria-label="Run macro"><svg class="i28"><use href="#play"/></svg></button></div>
 <div class="fctb d-flex align-items-center flex-shrink-0" role="toolbar" aria-label="View"><span class="grip grip0"></span>
 <button class="btn" aria-label="Fit all"><svg class="i28"><use href="#fit"/></svg></button><button class="btn" aria-label="Fit selection"><svg class="i28"><use href="#fitsel"/></svg></button><button class="btn" aria-label="Draw style"><svg class="i28"><use href="#nodraw"/></svg></button><button class="btn dd" aria-label="Draw style list"><svg class="i10"><use href="#dn"/></svg></button><button class="btn" aria-label="Bounding box"><svg class="i28"><use href="#selbox"/></svg></button><span class="sepv"></span>
 <button class="btn" aria-label="Back"><svg class="i28"><use href="#back"/></svg></button><button class="btn" aria-label="Forward"><svg class="i28"><use href="#fwd"/></svg></button><button class="btn" aria-label="Go to link"><svg class="i28"><use href="#link"/></svg></button><button class="btn dd" aria-label="Link list"><svg class="i10"><use href="#dn"/></svg></button><span class="sepv"></span>
 <button class="btn" aria-label="Sync view"><svg class="i28"><use href="#sync"/></svg></button><button class="btn dd" aria-label="Sync list"><svg class="i10"><use href="#dn"/></svg></button><button class="btn" aria-label="Isometric"><svg class="i28"><use href="#iso"/></svg></button><span class="sepv"></span>
 <button class="btn" aria-label="Front"><svg class="i28"><use href="#vf"/></svg></button><button class="btn" aria-label="Top"><svg class="i28"><use href="#vt"/></svg></button><button class="btn" aria-label="Right"><svg class="i28"><use href="#vr"/></svg></button><span class="sepv"></span>
 <button class="btn" aria-label="Rear"><svg class="i28"><use href="#vb"/></svg></button><button class="btn" aria-label="Bottom"><svg class="i28"><use href="#vd"/></svg></button><button class="btn" aria-label="Left"><svg class="i28"><use href="#vl"/></svg></button><span class="sepv"></span>
 <button class="btn" aria-label="Measure"><svg class="i28"><use href="#ruler"/></svg></button><span class="grip"></span>
 <button class="btn" aria-label="Create part"><svg class="i28"><use href="#part"/></svg></button><button class="btn" aria-label="Create group"><svg class="i28"><use href="#fold"/></svg></button><button class="btn" aria-label="Make link"><svg class="i28"><use href="#lnk"/></svg></button><button class="btn" aria-label="Make sub-link"><svg class="i28"><use href="#lnk2"/></svg></button><button class="btn dd" aria-label="Link menu"><svg class="i10"><use href="#dn"/></svg></button></div>
 <div class="fctb d-flex align-items-center flex-shrink-0" role="toolbar" aria-label="TechDraw"><span class="grip grip0"></span>
 <button class="btn" aria-label="New page"><svg class="i28"><use href="#tpage"/></svg></button><button class="btn" aria-label="Page from template"><svg class="i28"><use href="#tfold"/></svg></button><button class="btn" aria-label="Redraw"><svg class="i28"><use href="#trefr"/></svg></button><span class="grip"></span>
 <button class="btn" aria-label="Insert view"><svg class="i28"><use href="#tview"/></svg></button><button class="btn" aria-label="Active view"><svg class="i28"><use href="#tcam"/></svg></button><button class="btn" aria-label="Projection group"><svg class="i28"><use href="#tsec"/></svg></button><button class="btn" aria-label="Section view"><svg class="i28"><use href="#tcut"/></svg></button><button class="btn" aria-label="Detail view"><svg class="i28"><use href="#tdet"/></svg></button><button class="btn" aria-label="Draft view"><svg class="i28"><use href="#tdraft"/></svg></button><button class="btn" aria-label="Arch view"><svg class="i28"><use href="#tarch"/></svg></button><button class="btn" aria-label="Spreadsheet view"><svg class="i28"><use href="#tspr"/></svg></button><span class="grip"></span>
 <button class="btn" aria-label="Clip group"><svg class="i28"><use href="#clip1"/></svg></button><button class="btn" aria-label="Add to clip"><svg class="i28"><use href="#clip2"/></svg></button><button class="btn" aria-label="Remove from clip"><svg class="i28"><use href="#clip3"/></svg></button><span class="grip"></span>
 <button class="btn" aria-label="Length dimension"><svg class="i28"><use href="#dl"/></svg></button><button class="btn" aria-label="Horizontal dimension"><svg class="i28"><use href="#dh"/></svg></button><button class="btn" aria-label="Vertical dimension"><svg class="i28"><use href="#dv"/></svg></button><button class="btn dd more ms-3">»</button><span class="grip"></span>
 <button class="btn" aria-label="Export page"><svg class="i28"><use href="#texp"/></svg></button><button class="btn dd more">»</button><span class="grip"></span>
 <button class="btn" aria-label="Hatch"><svg class="i28"><use href="#thatch"/></svg></button><button class="btn dd more">»</button><span class="grip"></span>
 <button class="btn" aria-label="Annotation"><svg class="i28"><use href="#tann"/></svg></button><button class="btn dd more">»</button></div>

 <div class="d-flex flex-fill clip">
  <aside class="combo d-flex flex-column clip">
   <div class="dockttl d-flex align-items-center"><span class="flex-fill">Combo View</span><button class="btn" aria-label="Float"><svg><use href="#flt"/></svg></button><button class="btn ms-1 me-1" aria-label="Close"><svg><use href="#cls"/></svg></button></div>
   <div class="fctabs d-flex align-items-end flex-shrink-0"><button class="btn fctab on">Model</button><button class="btn fctab">Tasks</button></div>
   <div class="pane d-flex flex-column flex-fill clip">
    <div class="boxed treebox d-flex flex-column flex-shrink-0">
     <div class="d-flex flex-fill clip">
      <div class="flex-fill clip">
       <div class="hdr d-flex align-items-center"><span class="flex-fill border-end">Labels &amp; Attributes</span><span class="ps-1 clip">Des</span></div>
       <ul class="list-unstyled m-0">
       <li class="trow sel lv3 d-flex align-items-center"><span class="tw"><svg class="i10"><use href="#dn"/></svg></span><svg class="i16"><use href="#cubew"/></svg><span class="lb">top</span></li>
       <li class="trow lv5 d-flex align-items-center"><svg class="i16"><use href="#dh"/></svg><span class="lb">Dimension</span></li>
       <li class="trow lv5 d-flex align-items-center"><svg class="i16"><use href="#dh"/></svg><span class="lb">Dimension001</span></li>
       <li class="trow lv5 d-flex align-items-center"><svg class="i16"><use href="#dd0"/></svg><span class="lb">Dimension002</span></li>
       <li class="trow lv5 d-flex align-items-center"><svg class="i16"><use href="#dd0"/></svg><span class="lb">Dimension003</span></li>
       <li class="trow lv5 d-flex align-items-center"><svg class="i16"><use href="#dv"/></svg><span class="lb">Dimension004</span></li>
       <li class="trow lv5 d-flex align-items-center"><svg class="i16"><use href="#dv"/></svg><span class="lb">Dimension005</span></li>
       <li class="trow lv5 d-flex align-items-center"><svg class="i16"><use href="#dv"/></svg><span class="lb">Dimension006</span></li>
       <li class="trow lv5 d-flex align-items-center"><svg class="i16"><use href="#dh"/></svg><span class="lb">Dimension007</span></li>
       <li class="trow lv5 d-flex align-items-center"><svg class="i16"><use href="#dh"/></svg><span class="lb">Dimension008</span></li>
       <li class="trow lv5 d-flex align-items-center"><svg class="i16"><use href="#dv"/></svg><span class="lb">Dimension009</span></li>
       <li class="trow lv5 d-flex align-items-center"><svg class="i16"><use href="#dh"/></svg><span class="lb">Dimension010</span></li>
       <li class="trow lv3 d-flex align-items-center"><svg class="i16"><use href="#ann16"/></svg><span class="lb">Annotation</span></li>
       <li class="trow lv1 d-flex align-items-center"><span class="tw"><svg class="i10"><use href="#dn"/></svg></span><svg class="i16"><use href="#pg"/></svg><span class="lb">Page001</span></li>
       <li class="trow lv3 d-flex align-items-center"><svg class="i16"><use href="#tpl"/></svg><span class="lb">Template001</span></li>
       <li class="trow lv2 d-flex align-items-center"><span class="tw"><svg class="i10"><use href="#dn"/></svg></span><svg class="i16"><use href="#cube16"/></svg><span class="lb">ProjGroup001</span></li></ul>
      </div>
      <div class="sbv"><button class="btn" aria-label="Up"><svg class="i10"><use href="#up"/></svg></button><span style="flex:72"></span><span class="th" style="flex:108"></span><span style="flex:95"></span><button class="btn" aria-label="Down"><svg class="i10"><use href="#dn"/></svg></button></div>
     </div>
     <div class="sbh"><button class="btn" aria-label="Scroll left"><svg class="i10"><use href="#lf"/></svg></button><span class="th" style="flex:180"></span><span style="flex:56"></span><button class="btn" aria-label="Scroll right"><svg class="i10"><use href="#rt"/></svg></button><span class="cn"></span></div>
    </div>
    <div class="boxed propbox d-flex flex-column flex-fill clip">
     <div class="d-flex flex-fill clip">
      <div class="flex-fill clip">
       <table class="ptab"><colgroup><col style="width:19px"><col style="width:155px"><col></colgroup>
       <thead><tr class="hdr"><th colspan="2">Property</th><th>Value</th></tr></thead><tbody>
       <tr class="alt cut"><td></td><th scope="row">Keep Label</th><td>false</td></tr>
       <tr class="grp"><td></td><th colspan="2" scope="rowgroup">Decoration</th></tr>
       <tr class="cur alt"><td></td><th scope="row">Arc Center Marks</th><td>true</td></tr>
       <tr><td></td><th scope="row">Center Scale</th><td>0.50</td></tr>
       <tr class="alt"><td></td><th scope="row">Horiz Center Line</th><td>false</td></tr>
       <tr class="tall"><td></td><th scope="row">Section Line Color</th><td><span class="d-flex align-items-center gap-1"><span class="swatch me-1"></span>[0, 0, 0]</span></td></tr>
       <tr class="alt"><td></td><th scope="row">Section Line Style</th><td>Dash</td></tr>
       <tr><td></td><th scope="row">Show All Edges</th><td>false</td></tr>
       <tr class="alt"><td></td><th scope="row">Show Section Line</th><td>true</td></tr>
       <tr><td></td><th scope="row">Vert Center Line</th><td>false</td></tr>
       <tr class="grp"><td></td><th colspan="2" scope="rowgroup">Display Options</th></tr>
       <tr><td></td><th scope="row">Show In Tree</th><td>true</td></tr>
       <tr class="alt"><td></td><th scope="row">Visibility</th><td>true</td></tr>
       <tr class="grp"><td></td><th colspan="2" scope="rowgroup">Highlight</th></tr>
       <tr class="alt"><td></td><th scope="row">Highlight Adjust</th><td>0.00</td></tr>
       </tbody></table>
      </div>
      <div class="sbv"><button class="btn" aria-label="Up"><svg class="i10"><use href="#up"/></svg></button><span style="flex:14"></span><span class="th" style="flex:167"></span><span style="flex:115"></span><button class="btn" aria-label="Down"><svg class="i10"><use href="#dn"/></svg></button></div>
     </div>
     <div class="sbh"><button class="btn" aria-label="Scroll left"><svg class="i10"><use href="#lf"/></svg></button><span class="th" style="flex:223"></span><span style="flex:12"></span><button class="btn" aria-label="Scroll right"><svg class="i10"><use href="#rt"/></svg></button><span class="cn"></span></div>
    </div>
    <div class="lowtabs d-flex flex-shrink-0 align-items-start"><button class="btn fctab on low">View</button><button class="btn fctab lowd">Data</button></div>
   </div>
  </aside>

  <main class="mainv d-flex flex-column flex-fill clip">
   <div class="d-flex flex-fill clip">
    <div class="canvasg flex-fill clip">
    <svg width="100%" height="100%" role="img" aria-label="Technical drawing"><g transform="translate(-287 -188)">
     <path d="M307.500 180v574.500H945V180z" fill="#fff" stroke="#000"/>
     <g stroke="#333" fill="none"><path d="M945 197.500H335.500v527H945M463.500 187v10M591.500 187v10M719.500 187v10M847.500 187v10M314 329.500h21M308 461.500h27M314 592.500h21M463.500 725v20M591.500 725v20M719.500 732v20M847.500 732v13"/>
     <path stroke="#000" d="M687.500 725v13M687 731.500h258M743.500 725v6M770.500 725v6M798.500 725v6M826.500 725v13M854.500 725v6M881.500 725v6M909.500 725v6M937.500 725v6"/></g>
     <g font-family="DejaVu Sans Condensed, DejaVu Sans, sans-serif" font-size="13" text-anchor="middle" fill="#000">
      <text transform="translate(326 264) rotate(-90)">4</text><text transform="translate(326 395) rotate(-90)">3</text><text transform="translate(326 527) rotate(-90)">2</text><text transform="translate(326 658) rotate(-90)">1</text>
      <g text-anchor="start"><text transform="translate(404 190) rotate(-90)">F</text><text transform="translate(532 190) rotate(-90)">E</text><text transform="translate(660 190) rotate(-90)">D</text><text transform="translate(788 190) rotate(-90)">C</text><text transform="translate(916 190) rotate(-90)">B</text></g>
      <text x="397" y="742">F</text><text x="525" y="742">E</text><text x="653" y="742">D</text></g>
     <g fill="none" stroke="#000" stroke-width="1"><path d="M476.500 228.500v54M920.500 228.500v54M476 236.500h444M531.500 262v79M476 270.500h55M864.500 259v81M864 267.500h56M407 281.500h70M920 281.500h25M415.500 282v221M407 503.500h70M457.500 420v83M450 420.500h140M476.500 503v55M587.500 416v142M476 549.500h111M698 419.500h222M920.500 392v35M528 336.500h417M920 392.500h25M483 349l144-36M521 442l160-53"/></g>
     <path d="M476 281.500h444v111H698v111H476z" fill="none" stroke="#000" stroke-width="2"/>
     <g fill="none" stroke="#000" stroke-width="1.600"><circle cx="531.500" cy="337" r="22.200"/><circle cx="864.500" cy="337" r="22.200"/><circle cx="587" cy="420" r="41.600"/></g>
     <g fill="#000"><circle cx="476" cy="281" r="3"/><circle cx="920" cy="281" r="3"/><circle cx="920" cy="392" r="3"/><circle cx="698" cy="392" r="3"/><circle cx="698" cy="503" r="3"/><circle cx="476" cy="503" r="3"/><circle cx="554" cy="337" r="3"/><circle cx="887" cy="337" r="3"/><circle cx="629" cy="420" r="3"/>
     <path d="M476 236.500l15-3v6zM920 236.500l-15-3v6zM476 270.500l15-3v6zM531 270.500l-15-3v6zM865 267.500l15-3v6zM920 267.500l-15-3v6zM415.500 281l-3 15h6zM415.500 503l-3-15h6zM457.500 420l-3 15h6zM457.500 503l-3-15h6zM476 549.500l15-3v6zM587 549.500l-15-3v6zM698 419.500l15-3v6zM920 419.500l-15-3v6zM553 332l14-7 2 6zM510 342l-13 1 1 5zM627 407l13-8 2 6zM547 433l-14 2 2 6z"/></g>
     <path d="M472.500 277.500h451v249.500h-451z" fill="none" stroke="#22b322" stroke-dasharray="4 2"/>
     <g font-family="DejaVu Sans Condensed, DejaVu Sans, sans-serif" font-size="12" text-anchor="middle" fill="#000"><text x="696" y="232">80.00</text><text x="502" y="266">10.00</text><text x="892" y="263">10.00</text><text x="524" y="546">20.00</text><text x="801" y="415">40.00</text><text transform="translate(411 399) rotate(-90)">40.00</text><text transform="translate(452 462) rotate(-90)">15.00</text><text transform="translate(608 313) rotate(-14)">Φ8.00</text><text transform="translate(661 390) rotate(-18)">Φ15.00</text>
      <g fill="#22b322" font-size="13"><text x="698" y="526">top</text><text x="698" y="546">asdfasd</text></g>
      <g text-anchor="start" font-size="13"><text x="404" y="600">Some nice</text><text x="404" y="619">long</text><text x="404" y="637">detailed text accompanying this</text><text x="404" y="656">very important drawing....</text></g><text x="497" y="695" font-size="13">Annotation</text></g>
     <path d="M402.500 580.500h189v116h-189z" fill="none" stroke="#000" stroke-dasharray="4 2"/>
     <g fill="#5dfc5d"><path d="M717 607h9v10h-9zM717 629h9v10h-9zM823 599h9v13h-9zM823 621h9v10h-9zM735 692h11v10h-11zM789 692h10v10h-10zM822 692h9v10h-9z"/></g>
     <path d="M945 595.500H715.500V725M715 641.500h230M715 677.500h230M715 713.500h230M820.500 595v118M763.500 642v71" fill="none" stroke="#000"/>
     <g font-family="Liberation Mono, monospace" font-size="6" fill="#222"><text x="718" y="604">DESIGNED BY:</text><text x="718" y="627">DATE:</text><text x="718" y="648">SIZE</text><text x="718" y="684">SCALE</text><text x="767" y="684">WEIGHT (kg)</text><text x="823" y="684">DRAWING NUMBER</text></g>
     <g font-family="Liberation Sans, sans-serif" font-size="11" fill="#000"><text x="717" y="616">Designed by Name</text><text x="717" y="638">Date</text><text x="718" y="701">Scale</text><text x="769" y="701">Weight</text><text x="822" y="701">Drawing number</text><text x="823" y="630" font-size="10">Subtitle</text><text x="823" y="610" font-size="15">Title</text><text x="726" y="668" font-size="21">A4</text><text x="718" y="722" font-size="7">This drawing is our property; it can't be reproduced or communicated without our written consent</text></g>
    </g></svg>
    </div>
    <div class="sbv"><button class="btn" aria-label="Up"><svg class="i10"><use href="#up"/></svg></button><span style="flex:227"></span><span class="th" style="flex:261"></span><span style="flex:174"></span><button class="btn" aria-label="Down"><svg class="i10"><use href="#dn"/></svg></button></div>
   </div>
   <div class="sbh"><button class="btn" aria-label="Scroll left"><svg class="i10"><use href="#lf"/></svg></button><span style="flex:203"></span><span class="th" style="flex:165"></span><span style="flex:257"></span><button class="btn" aria-label="Scroll right"><svg class="i10"><use href="#rt"/></svg></button><span class="cn"></span></div>
   <div class="mtabs d-flex align-items-start flex-shrink-0">
    <div class="mtab d-flex align-items-center ps-0 clip" style="flex:177 1 0"><button class="btn">ombined-20210512 : 1*</button><button class="btn ms-1" aria-label="Close tab"><svg class="i12"><use href="#clx"/></svg></button></div>
    <div class="mtab d-flex align-items-center clip" style="flex:240 1 0"><svg class="i16"><use href="#fcf"/></svg><button class="btn ms-1">test-techdraw-exporting : 1*</button><button class="btn ms-1" aria-label="Close tab"><svg class="i12"><use href="#clx"/></svg></button></div>
    <div class="mtab on d-flex align-items-center clip" style="flex:219 1 0"><svg class="i16"><use href="#pg"/></svg><button class="btn ms-2">test-techdraw-exporting*</button><button class="btn ms-1" aria-label="Close tab"><svg class="i12"><use href="#clx"/></svg></button></div>
    <button class="btn mnav" aria-label="Previous"><svg class="i10"><use href="#lf"/></svg></button><button class="btn mnav" aria-label="Next"><svg class="i10"><use href="#rt"/></svg></button>
   </div>
  </main>
 </div>
 <div class="dockttl rephead d-flex align-items-center flex-shrink-0"><span class="flex-fill">Report view</span><button class="btn" aria-label="Float"><svg><use href="#flt"/></svg></button><button class="btn ms-1" aria-label="Close"><svg><use href="#cls"/></svg></button></div>
 <div class="report d-flex flex-shrink-0"><div class="flex-fill"><div>13:21:07&nbsp; DVD::getDimValue - Dimension054 - 2D references are corrupt (5)</div><div>13:21:07&nbsp; DVD::getDimValue - Dimension054 - 2D references are corrupt (5)</div><div>13:21:07&nbsp; DVD::getDimValue - Dimension054 - 2D references are corrupt (5)</div></div>
 <div class="sbv"><button class="btn" aria-label="Up"><svg class="i10"><use href="#up"/></svg></button><span style="flex:9"></span><span class="th" style="flex:30"></span><span style="flex:2"></span><button class="btn" aria-label="Down"><svg class="i10"><use href="#dn"/></svg></button></div></div>
 <footer class="fcstat d-flex flex-shrink-0 clip"><span class="flex-fill">Valid, Internal name: ProjGroup001</span><svg class="i12"><path d="M3 12V5q3-5 6 0v7M6 4v4" fill="none" stroke="#333" stroke-width="1.500"/></svg><span>Blender</span><svg class="i10 me-2"><use href="#dn"/></svg><span class="pe-4">230.92 mm x 100.00 mm</span></footer>
</section>

<div class="d-flex flex-column flex-fill clip overflow-visible">
<!-- Inkscape -->
<section class="rwin ink d-flex flex-column" aria-label="Inkscape">
 <header class="titlebar d-flex align-items-center flex-shrink-0"><span class="flex-fill text-center">test-dimensions-export-2-scale1-2.dxf - Inkscape</span><button class="btn" aria-label="Close"><svg class="i10"><use href="#x"/></svg></button></header>
 <nav class="menu d-flex align-items-center flex-shrink-0"><button class="btn">File</button><button class="btn">Edit</button><button class="btn">View</button><button class="btn">Layer</button><button class="btn">Object</button><button class="btn">Path</button><button class="btn">Text</button><button class="btn">Filters</button><button class="btn">Extensions</button><button class="btn">Help</button></nav>
 <div class="itb d-flex align-items-center flex-shrink-0"><button class="btn" aria-label="Select all"><svg class="i16"><use href="#k1"/></svg></button><button class="btn" aria-label="Select in layers"><svg class="i16"><use href="#k2"/></svg></button><button class="btn" aria-label="Deselect"><svg class="i16"><use href="#k3"/></svg></button><span class="ivs"></span>
 <button class="btn" aria-label="Rotate left"><svg class="i16"><use href="#rotl"/></svg></button><button class="btn" aria-label="Rotate right"><svg class="i16 flipx"><use href="#rotl"/></svg></button><button class="btn" aria-label="Flip horizontal"><svg class="i16"><use href="#fliph"/></svg></button><button class="btn" aria-label="Flip vertical"><svg class="i16 quart"><use href="#fliph"/></svg></button><span class="ivs"></span>
 <button class="btn" aria-label="Lower to bottom"><svg class="i16"><use href="#low"/></svg></button><button class="btn" aria-label="Lower"><svg class="i16"><use href="#low1"/></svg></button><button class="btn" aria-label="Raise"><svg class="i16 half"><use href="#low1"/></svg></button><button class="btn" aria-label="Raise to top"><svg class="i16 half"><use href="#low"/></svg></button><span class="ivs"></span>
 <label for="px" class="ms-1 me-1">X:</label><span class="spin d-flex"><input id="px" value="230.511" disabled><button class="btn" aria-label="Less X">−</button><button class="btn" aria-label="More X">+</button></span>
 <label for="py" class="ms-2 me-1">Y:</label><span class="spin d-flex"><input id="py" value="455.889" disabled><button class="btn" aria-label="Less Y">−</button><button class="btn" aria-label="More Y">+</button></span>
 <span class="flex-fill"></span><button class="btn endb" aria-label="More"><svg class="i10"><use href="#dn"/></svg></button></div>
 <div class="d-flex flex-fill clip">
  <div class="tools d-flex flex-column clip"><button class="btn press" aria-label="Select"><svg class="i22"><use href="#ai"/></svg></button><button class="btn" aria-label="Node"><svg class="i22"><use href="#anode"/></svg></button><span class="ihs"></span>
  <button class="btn" aria-label="Rectangle"><svg class="i22"><use href="#arect"/></svg></button><button class="btn" aria-label="Ellipse"><svg class="i22"><use href="#aell"/></svg></button><button class="btn" aria-label="Star"><svg class="i24"><use href="#astar"/></svg></button><button class="btn" aria-label="3D box"><svg class="i24"><use href="#abox"/></svg></button><button class="btn" aria-label="Spiral"><svg class="i24"><use href="#aspir"/></svg></button><span class="ihs"></span>
  <button class="btn" aria-label="Pen"><svg class="i24"><use href="#apen"/></svg></button><button class="btn" aria-label="Pencil"><svg class="i24"><use href="#apcl"/></svg></button><button class="btn" aria-label="Calligraphy"><svg class="i24"><use href="#acal"/></svg></button><button class="btn" aria-label="Text"><svg class="i24"><use href="#atxt"/></svg></button><span class="ihs"></span></div>
  <div class="flex-fill clip">
  <svg width="100%" height="100%" role="img" aria-label="Inkscape canvas"><g transform="translate(-1005 -100)">
   <rect x="1024" y="118" width="900" height="500" fill="#fff"/>
   <g transform="translate(1007 100)"><rect x=".5" y=".5" width="16" height="16" rx="3" fill="#f3f2f0" stroke="#cfccc8"/><use href="#lockc" width="14" height="14" x="1" y="1"/></g>
   <g stroke="#8b8e8f" fill="none"><path d="M1024 117.500h600M1023.500 118v420"/><path d="M1034.500 114.500H1560" stroke-width="5" stroke-dasharray="1 11.850"/><path d="M1060.500 100v17M1188.500 100v17M1317.500 100v17M1446.500 100v17M1124.500 108v9M1253.500 108v9M1382.500 108v9M1511.500 108v9"/><path d="M1020.500 119.500V532" stroke-width="5" stroke-dasharray="1 11.900"/><path d="M1006 196.500h17M1006 325.500h17M1006 454.500h17M1014 132.500h9M1014 261.500h9M1014 390.500h9"/></g>
   <path d="M1185 113h8l-4 4.500zM1017 516v8l6-4z" fill="#8b8e8f"/>
   <g font-family="DejaVu Sans, sans-serif" font-size="10" fill="#8b9aa5"><text x="1063" y="110">0</text><text x="1191" y="110">250</text><text x="1320" y="110">500</text><text x="1449" y="110">750</text><text x="1011" y="206">5</text><text x="1011" y="215">0</text><text x="1011" y="224">0</text><text x="1011" y="335">7</text><text x="1011" y="344">5</text><text x="1011" y="353">0</text><text x="1011" y="464">1</text><text x="1011" y="473">0</text><text x="1011" y="482">0</text><text x="1011" y="491">0</text></g>
   <path d="M1470 118v402M1062 519.500h409" stroke="#666" stroke-width="3" fill="none"/><path d="M1060.500 118v401" stroke="#333"/>
   <g fill="none" stroke="#444"><path d="M1178.500 356.500v-222h312.500v148H1335v-18h195.500v-78H1140.500v156H1335v-78M1178.500 174.500h39v51M1202 225.500h311.500v-39M1451.500 225.500v-53h39.500M1165.500 342.500v-58h121M1257.500 284.500v72h-79"/><circle cx="1218" cy="226" r="15.700"/><circle cx="1452" cy="226" r="15.700"/><circle cx="1257" cy="284.500" r="29.300"/></g>
   <g font-family="Liberation Sans, sans-serif" font-size="7" fill="#000"><text x="1333" y="144">mm</text><text x="1197" y="168">mm</text><text x="1270" y="201">â</text><text x="1282" y="201">mm</text><text x="1307" y="256">â</text><text x="1319" y="256">mm</text><text x="1471" y="166">mm</text><text x="1521" y="214">mm</text><text x="1540" y="227">mm</text><text x="1407" y="273">mm</text><text x="1130" y="267">mm</text><text x="1160" y="311">mm</text><text x="1212" y="364">mm</text><text x="1194" y="430" font-size="10">Some nice</text></g>
  </g></svg></div>
  <div class="iscroll d-flex flex-column align-items-center"><span class="icorner press d-flex justify-content-center rounded-1">¶</span><span style="flex:188"></span><span class="vth" style="flex:106"></span><span style="flex:121"></span></div>
  <div class="idock">
   <div class="idhead d-flex align-items-center"><svg width="16" height="14"><use href="#objs"/></svg><span class="flex-fill">Objects</span><button class="btn mb-2" aria-label="Iconify"><svg width="11" height="11"><rect x=".5" y=".5" width="10" height="10" rx="2" fill="none" stroke="#aaa"/><path d="M7 3v5L3 5.500z" fill="#aaa"/></svg></button><button class="btn mb-2 endb" aria-label="Close dock"><svg width="11" height="11"><rect x=".5" y=".5" width="10" height="10" rx="2" fill="none" stroke="#aaa"/><path d="M3 3l5 5M8 3L3 8" stroke="#999" stroke-width="1.500"/></svg></button></div>
   <div class="ibox">
    <table class="otab"><colgroup><col style="width:28px"><col style="width:29px"><col style="width:29px"><col style="width:35px"><col style="width:32px"><col></colgroup>
    <thead><tr><th>V</th><th>L</th><th>T</th><th>CM</th><th>HL</th><th>Label</th></tr></thead><tbody>
    <tr class="cut"><td></td><td></td><td></td><td></td><td><svg width="10" height="4"><path d="M0 0h10v3H0z" fill="#f00"/></svg></td><td></td></tr>
    <tr><td><svg width="18" height="16"><use href="#eyek"/></svg></td><td><svg width="14" height="17"><use href="#lock0"/></svg></td><td><div class="abc">abc</div><svg width="16" height="8"><use href="#par"/></svg></td><td></td><td><svg width="10" height="20"><use href="#hl"/></svg></td><td class="p1">path61</td></tr>
    <tr><td><svg width="18" height="16"><use href="#eyek"/></svg></td><td><svg width="14" height="17"><use href="#lock0"/></svg></td><td><div class="abc">abc</div><svg width="16" height="8"><use href="#par"/></svg></td><td></td><td><svg width="10" height="20"><use href="#hl"/></svg></td><td class="p1">path59</td></tr>
    <tr><td><svg width="18" height="16"><use href="#eyek"/></svg></td><td><svg width="14" height="17"><use href="#lock0"/></svg></td><td><div class="abc">abc</div><svg width="16" height="8"><use href="#par"/></svg></td><td></td><td><svg width="10" height="20"><use href="#hl"/></svg></td><td class="p1">path57</td></tr>
    <tr><td><svg width="18" height="16"><use href="#eyek"/></svg></td><td><svg width="14" height="17"><use href="#lock0"/></svg></td><td><div class="abc">abc</div><svg width="16" height="8"><use href="#par"/></svg></td><td></td><td><svg width="10" height="20"><use href="#hl"/></svg></td><td class="p1">path55</td></tr>
    <tr><td><svg width="18" height="16"><use href="#eyek"/></svg></td><td><svg width="14" height="17"><use href="#lock0"/></svg></td><td><svg width="16" height="14"><use href="#lay"/></svg></td><td></td><td><svg width="10" height="20"><use href="#hl"/></svg></td><td class="p0">0</td></tr>
    </tbody></table>
    <div class="orow d-flex align-items-center"><button class="btn" aria-label="Add"><svg class="i12"><use href="#pl"/></svg></button><button class="btn" aria-label="Remove"><svg class="i12"><use href="#mi"/></svg></button><button class="btn" aria-label="Collapse"><svg class="i16"><use href="#o3"/></svg></button><button class="btn" aria-label="To top"><svg class="i16"><use href="#otop"/></svg></button><button class="btn" aria-label="Up"><svg class="i16"><use href="#oup"/></svg></button><button class="btn" aria-label="Down"><svg class="i16 half"><use href="#oup"/></svg></button><button class="btn" aria-label="To bottom"><svg class="i16 half"><use href="#otop"/></svg></button></div>
    <div class="brow d-flex align-items-center justify-content-end gap-2"><label for="bm">Blend mode:</label><span class="blend"><select id="bm"><option>Normal</option></select><svg class="i12 position-absolute top-50 end-0 translate-middle"><use href="#dn"/></svg></span></div>
    <div class="ihs mb-2"></div>
    <div class="lev d-flex align-items-center"><label for="bl">Blur (%)</label><input id="bl" value="0.0"><button class="btn text-black-50" aria-label="Less blur"><span class="opacity-25">−</span></button><button class="btn fs-5" aria-label="More blur">+</button></div>
    <div class="lev full d-flex align-items-center"><label for="op">Opacity (%)</label><input id="op" value="100.0"><button class="btn fs-5" aria-label="Less opacity">−</button><button class="btn" aria-label="More opacity"><span class="opacity-25">+</span></button></div>
   </div>
  </div>
  <div class="cmd d-flex flex-column clip"><button class="btn" aria-label="New"><svg class="i16"><use href="#c1"/></svg></button><button class="btn" aria-label="Open"><svg class="i16"><use href="#c2"/></svg></button><button class="btn" aria-label="Save"><svg class="i16"><use href="#c3"/></svg></button><button class="btn" aria-label="Print"><svg class="i16"><use href="#c4"/></svg></button><span class="ihs"></span><button class="btn" aria-label="Import"><svg class="i16"><use href="#c5"/></svg></button><button class="btn" aria-label="Export"><svg class="i16"><use href="#c6"/></svg></button><span class="ihs"></span><button class="btn" aria-label="Undo"><svg class="i16"><use href="#c7"/></svg></button><button class="btn" aria-label="Redo"><svg class="i16"><use href="#c8"/></svg></button><span class="ihs"></span><button class="btn" aria-label="Copy"><svg class="i16"><use href="#c9"/></svg></button><button class="btn" aria-label="Cut"><svg class="i16"><use href="#c10"/></svg></button></div>
  <div class="snap d-flex flex-column"><button class="btn press" aria-label="Snap"><svg class="i16"><use href="#s1"/></svg></button><span class="ihs"></span><button class="btn" aria-label="Snap box"><svg class="i16"><use href="#s1"/></svg></button><button class="btn" aria-label="Snap edges"><svg class="i16"><use href="#s2"/></svg></button><button class="btn" aria-label="Snap corners"><svg class="i16"><use href="#s2b"/></svg></button><button class="btn" aria-label="Snap midpoints"><svg class="i16"><use href="#s2"/></svg></button><button class="btn" aria-label="Snap centers"><svg class="i16"><use href="#s2"/></svg></button><span class="ihs"></span><button class="btn press" aria-label="Snap nodes"><svg class="i16"><use href="#s1"/></svg></button><button class="btn" aria-label="Snap paths"><svg class="i16"><use href="#s3"/></svg></button><button class="btn" aria-label="Snap intersections"><svg class="i16"><use href="#s4"/></svg></button><button class="btn press" aria-label="Snap cusp"><svg class="i16"><use href="#s5"/></svg></button><button class="btn" aria-label="Snap smooth"><svg class="i16"><use href="#s5"/></svg></button></div>
 </div>
</section>
<!-- QCAD -->
<section class="rwin qc d-flex flex-column" aria-label="QCAD">
 <header class="titlebar d-flex align-items-center flex-shrink-0"><span class="flex-fill text-center">test-dimensions-export-2-scale1-2.dxf - QCAD</span><button class="btn" aria-label="Close"><svg class="i10"><use href="#x"/></svg></button></header>
 <nav class="menu d-flex align-items-center flex-shrink-0"><button class="btn">File</button><button class="btn">Edit</button><button class="btn">View</button><button class="btn">Select</button><button class="btn">Draw</button><button class="btn">Dimension</button><button class="btn">Modify</button><button class="btn">Snap</button><button class="btn">Info</button><button class="btn">Layer</button><button class="btn">Block</button><button class="btn">Window</button><button class="btn">Misc</button><button class="btn">Help</button></nav>
 <div class="qtb d-flex align-items-center flex-shrink-0"><button class="btn qon" aria-label="Select"><svg class="i20"><use href="#cur"/></svg></button><span class="w40"></span>
 <button class="btn" aria-label="New"><svg class="i22"><use href="#qnew"/></svg></button><button class="btn" aria-label="Open"><svg class="i22"><use href="#qopen"/></svg></button><span class="w8"></span><button class="btn" aria-label="Save"><svg class="i20"><use href="#qsave"/></svg></button><button class="btn" aria-label="Save as"><svg class="i20"><use href="#qsave2"/></svg></button><span class="w8"></span><button class="btn" aria-label="Print preview"><svg class="i22"><use href="#qprev"/></svg></button><span class="w16"></span><button class="btn" aria-label="Undo"><svg class="i22"><use href="#qundo"/></svg></button><button class="btn" aria-label="Redo"><svg class="i22"><use href="#qredo"/></svg></button><span class="w8"></span><button class="btn" aria-label="Erase"><svg class="i20"><use href="#qera"/></svg></button><span class="w8"></span><button class="btn" aria-label="Cut"><svg class="i22"><use href="#qcut"/></svg></button><button class="btn" aria-label="Copy"><svg class="i22"><use href="#qcopy"/></svg></button><button class="btn" aria-label="Paste"><svg class="i22"><use href="#qpaste"/></svg></button><span class="w16"></span><button class="btn" aria-label="Edit"><svg class="i20"><use href="#qred"/></svg></button><button class="btn" aria-label="Draft mode"><svg class="i22"><use href="#qdraft"/></svg></button><button class="btn qon" aria-label="Antialiasing"><svg class="i22"><use href="#qhalf"/></svg></button><span class="w8"></span><button class="btn qon" aria-label="Grid"><svg class="i22"><use href="#qdots"/></svg></button><span class="ps-1"></span>
 <button class="btn" aria-label="Zoom in"><svg class="i22"><use href="#z1"/></svg></button><button class="btn" aria-label="Zoom out"><svg class="i22"><use href="#z2"/></svg></button><button class="btn" aria-label="Auto zoom"><svg class="i22"><use href="#z3"/></svg></button><button class="btn" aria-label="Zoom selection"><svg class="i22"><use href="#z4"/></svg></button><button class="btn" aria-label="Previous view"><svg class="i22"><use href="#z5"/></svg></button><button class="btn" aria-label="Window zoom"><svg class="i22"><use href="#z6"/></svg></button><button class="btn" aria-label="Pan"><svg class="i22"><use href="#z7"/></svg></button></div>
 <div class="qrow2 flex-shrink-0 d-flex align-items-start"><button class="btn qopt" aria-label="Reset tool"><svg class="i16"><use href="#cur"/></svg></button></div>
 <div class="d-flex flex-fill clip">
  <div class="qbox clip">
   <div class="qgrid mb-2"><button class="btn" aria-label="Point"><svg><use href="#t1"/></svg></button><button class="btn" aria-label="Line"><svg><use href="#t2"/></svg></button><button class="btn" aria-label="Arc"><svg><use href="#t3"/></svg></button><button class="btn" aria-label="Circle"><svg><use href="#t4"/></svg></button><button class="btn" aria-label="Ellipse"><svg><use href="#t5"/></svg></button><button class="btn" aria-label="Spline"><svg><use href="#t6"/></svg></button><button class="btn" aria-label="Polyline"><svg><use href="#t7"/></svg></button><button class="btn" aria-label="Shape"><svg><use href="#t8"/></svg></button><button class="btn" aria-label="Hatch"><svg><use href="#t9"/></svg></button></div>
   <div class="qgrid mb-2"><button class="btn serif" aria-label="Text">A</button><button class="btn" aria-label="Dimension"><svg><use href="#ta"/></svg></button><button class="btn" aria-label="Bitmap"><svg><use href="#tb0"/></svg></button></div>
   <div class="qgrid"><button class="btn" aria-label="Modify"><svg><use href="#tc0"/></svg></button><button class="btn" aria-label="Measure"><svg><use href="#td0"/></svg></button></div>
  </div>
  <div class="d-flex flex-column flex-fill clip">
   <div class="qtabs d-flex flex-shrink-0"><div class="qtab d-flex align-items-center"><svg width="14" height="14"><use href="#qlogo"/></svg><button class="btn fw-bold">Un…</button><button class="btn" aria-label="Close tab"><svg class="i10 opacity-75"><use href="#x"/></svg></button></div>
   <div class="qtab d-flex align-items-center"><svg width="14" height="14"><use href="#qlogo"/></svg><button class="btn fw-bold">* case-all-cuts-…</button><button class="btn" aria-label="Close tab"><svg class="i10 opacity-75"><use href="#x"/></svg></button></div>
   <div class="qtab d-flex align-items-center"><svg width="14" height="14"><use href="#qlogo"/></svg><button class="btn fw-bold">* …</button><button class="btn" aria-label="Close tab"><svg class="i10 opacity-75"><use href="#x"/></svg></button></div>
   <div class="qtab on d-flex align-items-center"><svg width="14" height="14"><use href="#qlogo"/></svg><button class="btn fw-bold">test-dimensions-export…</button><button class="btn" aria-label="Close tab"><svg class="i10 opacity-50"><use href="#x"/></svg></button></div></div>
   <div class="flex-fill clip"><svg width="100%" height="100%" role="img" aria-label="QCAD canvas">
     <defs><pattern id="dots" x="1116" y="800" width="16.400" height="16.400" patternUnits="userSpaceOnUse"><rect width="1" height="1" fill="#8a8a8a"/></pattern></defs>
     <g transform="translate(-1038 -702)"><rect x="1061" y="725" width="557" height="258" fill="#000"/>
     <path d="M1116.500 725v258M1280.500 725v258M1444.500 725v258M1607.500 725v258M1061 800.500h557M1061 964.500h557" stroke="#262626"/><rect x="1061" y="725" width="557" height="258" fill="url(#dots)"/>
     <path d="M1067 723.500h551" stroke="#222" stroke-width="3" stroke-dasharray="1 15.400"/><path d="M1116.500 718v7M1280 718v7M1444 718v7M1607.500 718v7M1055 800.500h6M1055 964.500h6" stroke="#222"/><path d="M1059.500 734v249" stroke="#222" stroke-width="3" stroke-dasharray="1 15.400"/><path d="M1388 718h5l-2.500 3zM1054 834v5l4-2.500z"/>
     <g font-family="Noto Sans, sans-serif" font-size="12" text-anchor="middle" fill="#222"><text x="1116" y="714">0</text><text x="1279" y="714">100</text><text x="1443" y="714">200</text><text x="1607" y="714">300</text><text transform="translate(1050 800) rotate(-90)">100</text><text transform="translate(1050 964) rotate(-90)">0</text></g>
     <g fill="none" stroke="#eee"><path d="M1183.500 725v91.500H1347v-65h164.500V725M1347 765.500h131.500V725" /><path d="M1216 725v103.500h65.500v-60.500M1205.500 816.500v-48.500H1307" /><circle cx="1281.500" cy="767.700" r="24.800"/><path d="M1237 725q12 13 24 0M1434 725q12 13 24 0"/></g>
     <path d="M1116.500 944v39M1096 964.500h41" stroke="#a01414" stroke-width="1"/><circle cx="1116.500" cy="964.500" r="5" fill="none" stroke="#a01414"/>
     <text x="1200" y="891" font-family="Liberation Sans, sans-serif" font-size="12" fill="#ccc">Some nice</text>
     <rect x="1236" y="995" width="142" height="3" rx="1.500" fill="#858585"/><rect x="1628" y="848" width="3" height="36" rx="1.500" fill="#858585"/>
     <text x="1631" y="998" text-anchor="end" font-family="Noto Sans, sans-serif" font-size="14" fill="#444">10 &lt; 100</text></g></svg></div>
  </div>
  <div class="qside flex-shrink-0 d-flex flex-column">
   <div class="qdock qblocks flex-shrink-0"><h2 class="d-flex align-items-center gap-2"><span class="flex-fill">Block List</span><button class="btn me-1" aria-label="Float"><svg class="i12"><use href="#flq"/></svg></button><button class="btn" aria-label="Close"><svg class="i10 opacity-50"><use href="#x"/></svg></button></h2>
    <div class="qb d-flex"><button class="btn" aria-label="Show all"><svg width="16" height="12"><use href="#eye"/></svg></button><button class="btn" aria-label="Hide all"><svg width="16" height="12"><use href="#eyeg"/></svg></button><button class="btn" aria-label="Add block"><svg class="i12"><use href="#pr"/></svg></button><button class="btn" aria-label="Remove block"><svg class="i12"><use href="#mg"/></svg></button><button class="btn text-secondary">a|b</button><button class="btn" aria-label="Edit block"><svg class="i16"><use href="#pen"/></svg></button><button class="btn" aria-label="Insert block"><svg class="i12"><use href="#ins"/></svg></button><button class="btn" aria-label="Close block"><svg class="i12"><use href="#del"/></svg></button></div>
    <ul class="qlist list-unstyled"><li class="lrow d-flex align-items-center"><svg width="16" height="12"><use href="#eye"/></svg><svg class="i16"><use href="#pen"/></svg><span>*MODEL_SPACE</span></li><li class="lrow d-flex align-items-center"><svg width="16" height="12"><use href="#eye"/></svg><span class="i16"></span><span>*PAPER_SPACE</span></li></ul></div>
   <div class="qdock flex-fill clip d-flex flex-column"><h2 class="d-flex align-items-center gap-2"><span class="flex-fill">Layer List</span><button class="btn me-1" aria-label="Float"><svg class="i12"><use href="#flq"/></svg></button><button class="btn" aria-label="Close"><svg class="i10 opacity-50"><use href="#x"/></svg></button></h2>
    <div class="qb d-flex"><button class="btn" aria-label="Show all"><svg width="16" height="12"><use href="#eye"/></svg></button><button class="btn" aria-label="Hide all"><svg width="16" height="12"><use href="#eyeg"/></svg></button><button class="btn" aria-label="Add layer"><svg class="i12"><use href="#pr"/></svg></button><button class="btn" aria-label="Remove layer"><svg class="i12"><use href="#mr"/></svg></button><button class="btn" aria-label="Edit layer"><svg class="i16"><use href="#pen"/></svg></button></div>
    <div class="qlist clip flex-fill position-relative"><ul class="list-unstyled m-0"><li class="lrow on d-flex align-items-center"><svg width="16" height="12"><use href="#eyeb"/></svg><svg class="ms-1 me-2" width="12" height="14"><use href="#lk"/></svg>0</li><li class="lrow d-flex align-items-center"><svg width="16" height="12"><use href="#eye"/></svg><svg class="ms-1 me-2" width="12" height="14"><use href="#lk"/></svg>Annotation</li><li class="lrow d-flex align-items-center"><svg width="16" height="12"><use href="#eye"/></svg><svg class="ms-1 me-2" width="12" height="14"><use href="#lk"/></svg>Dimension</li><li class="lrow d-flex align-items-center"><svg width="16" height="12"><use href="#eye"/></svg><svg class="ms-1 me-2" width="12" height="14"><use href="#lk"/></svg>Dimension001</li><li class="lrow d-flex align-items-center"><svg width="16" height="12"><use href="#eye"/></svg><svg class="ms-1 me-2" width="12" height="14"><use href="#lk"/></svg>Dimension002</li></ul><span class="lth position-absolute rounded-1"></span></div></div>
  </div>
  <div class="qr d-flex flex-column ms-1 clip"><button class="btn qon" aria-label="Block list"><svg class="i20"><use href="#qw2"/></svg></button><button class="btn qon mb-2" aria-label="Layer list"><svg class="i20"><use href="#qw3"/></svg></button><button class="btn" aria-label="Properties"><svg class="i20"><use href="#qw"/></svg></button><button class="btn mb-2" aria-label="Library"><svg class="i20"><use href="#qw5"/></svg></button><button class="btn" aria-label="Command line"><svg class="i20"><use href="#qw4"/></svg></button></div>
 </div>
 <footer class="qstat d-flex flex-shrink-0 clip"><div class="qco border-end ps-1">167.1557,77.0387<br>@167.1557,77.0387</div><div class="qpo ps-1">184.0543&lt;25°<br>@184.0543&lt;25°</div><div class="qhint">Select entity or region</div><svg width="28" height="28"><use href="#mouse"/></svg><div class="qsel">No entities selected.</div></footer>
</section>
</div>
</div>
</body>
</html>
